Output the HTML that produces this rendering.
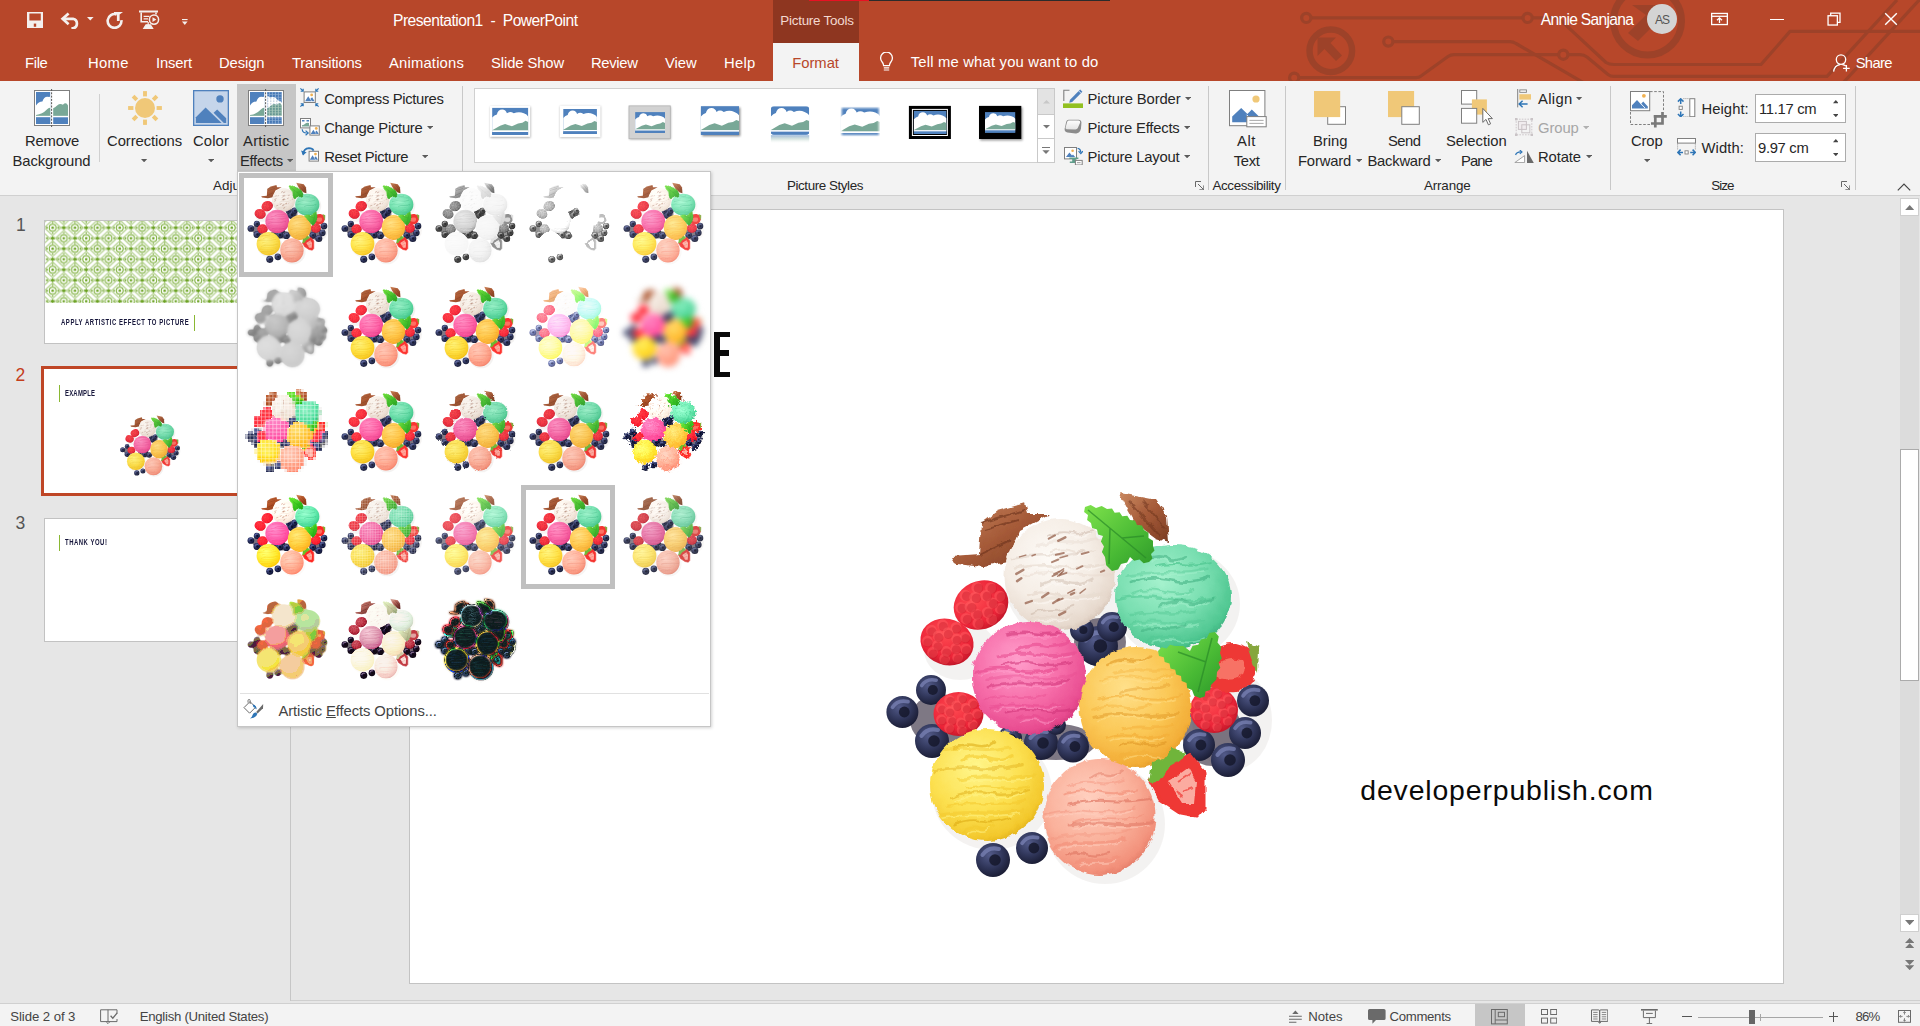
<!DOCTYPE html>
<html><head><meta charset="utf-8"><title>PowerPoint</title>
<style>
html,body{margin:0;padding:0;}
body{width:1920px;height:1026px;overflow:hidden;position:relative;background:#e6e6e6;font-family:"Liberation Sans", sans-serif;}
.t{position:absolute;white-space:pre;font-family:"Liberation Sans", sans-serif;}
.a{position:absolute;}

.sep{position:absolute;width:1px;background:#c8c8c8;top:86px;height:104px;}

</style></head><body>
<svg width="0" height="0" style="position:absolute"><defs><filter id="rough" x="-6%" y="-6%" width="112%" height="112%"><feTurbulence type="fractalNoise" baseFrequency="0.11" numOctaves="2" seed="7" result="n"/><feDisplacementMap in="SourceGraphic" in2="n" scale="6" xChannelSelector="R" yChannelSelector="G"/></filter><radialGradient id="gbb" cx="40%" cy="35%" r="70%"><stop offset="0" stop-color="#535b8a"/><stop offset="0.55" stop-color="#30365a"/><stop offset="1" stop-color="#181a30"/></radialGradient><radialGradient id="grs" cx="40%" cy="35%" r="70%"><stop offset="0" stop-color="#ff4c52"/><stop offset="0.7" stop-color="#ec2438"/><stop offset="1" stop-color="#be1628"/></radialGradient><linearGradient id="gch" x1="0" y1="0" x2="1" y2="1"><stop offset="0" stop-color="#c98860"/><stop offset="0.5" stop-color="#a55a38"/><stop offset="1" stop-color="#7a3c22"/></linearGradient><linearGradient id="glf" x1="0" y1="0" x2="1" y2="1"><stop offset="0" stop-color="#7fe24c"/><stop offset="0.6" stop-color="#48b934"/><stop offset="1" stop-color="#2c962a"/></linearGradient><radialGradient id="gv" cx="40%" cy="34%" r="72%"><stop offset="0" stop-color="#fdfaf6"/><stop offset="0.55" stop-color="#f5ede5"/><stop offset="0.88" stop-color="#e6d8cc"/><stop offset="1" stop-color="#cfbcae"/></radialGradient><clipPath id="cv"><ellipse cx="199.5" cy="105" rx="54" ry="55"/></clipPath><radialGradient id="gm" cx="40%" cy="34%" r="72%"><stop offset="0" stop-color="#a6f2ce"/><stop offset="0.55" stop-color="#78deb0"/><stop offset="0.88" stop-color="#4ec690"/><stop offset="1" stop-color="#36a878"/></radialGradient><clipPath id="cm"><ellipse cx="313" cy="127" rx="57" ry="51"/></clipPath><radialGradient id="gp" cx="40%" cy="34%" r="72%"><stop offset="0" stop-color="#ff9ecb"/><stop offset="0.55" stop-color="#f66ca8"/><stop offset="0.88" stop-color="#e84c90"/><stop offset="1" stop-color="#cf3378"/></radialGradient><clipPath id="cp"><ellipse cx="169" cy="208" rx="56" ry="55"/></clipPath><radialGradient id="go" cx="40%" cy="34%" r="72%"><stop offset="0" stop-color="#ffe08a"/><stop offset="0.55" stop-color="#fbc856"/><stop offset="0.88" stop-color="#f3ae38"/><stop offset="1" stop-color="#e09624"/></radialGradient><clipPath id="co"><ellipse cx="275.5" cy="237" rx="55" ry="59"/></clipPath><radialGradient id="gy" cx="40%" cy="34%" r="72%"><stop offset="0" stop-color="#fff68c"/><stop offset="0.55" stop-color="#fce050"/><stop offset="0.88" stop-color="#f3c82c"/><stop offset="1" stop-color="#dfae18"/></radialGradient><clipPath id="cy"><ellipse cx="127" cy="315" rx="56" ry="55"/></clipPath><radialGradient id="gs" cx="40%" cy="34%" r="72%"><stop offset="0" stop-color="#ffd0c0"/><stop offset="0.55" stop-color="#fab09a"/><stop offset="0.88" stop-color="#f2907a"/><stop offset="1" stop-color="#df7662"/></radialGradient><clipPath id="cs"><ellipse cx="239.5" cy="347" rx="55" ry="57"/></clipPath><symbol id="ice" viewBox="0 0 440 430"><g opacity=".5" fill="#e9e6e4"><ellipse cx="205" cy="112" rx="60" ry="60"/><ellipse cx="318" cy="134" rx="62" ry="56"/><ellipse cx="132" cy="322" rx="60" ry="58"/><ellipse cx="245" cy="354" rx="60" ry="60"/><ellipse cx="100" cy="180" rx="36" ry="30"/><ellipse cx="372" cy="250" rx="40" ry="50"/></g><g fill="#2a2034" opacity=".6"><ellipse cx="240" cy="172" rx="26" ry="24"/><ellipse cx="196" cy="272" rx="40" ry="18"/><ellipse cx="352" cy="262" rx="30" ry="34"/><ellipse cx="80" cy="250" rx="30" ry="26"/></g><g filter="url(#rough)"><path d="M92 87 L119 85 L121 53 L137 41 L165 33 L168 44 L190 44 L160 60 L147 92 L124 97 L96 94 Z" fill="url(#gch)"/><path d="M121 53 L165 40 M119 85 L150 70 M124 60 L158 50" stroke="#6a321c" stroke-width="2" fill="none" opacity=".6"/><path d="M260 23 L296 30 L307 46 L309 73 L296 69 L277 55 L268 39 Z" fill="url(#gch)"/><path d="M270 32 L300 66 M282 30 L305 58" stroke="#6a321c" stroke-width="2" opacity=".5"/></g><circle cx="238" cy="176" r="20" fill="url(#gbb)"/><circle cx="240.4" cy="176.0" r="6.8" fill="#15172b" opacity=".85"/><path d="M225.6 170.0 Q232.0 160.0 245.0 163.0" stroke="#7f88bb" stroke-width="4.8" fill="none" stroke-linecap="round" opacity=".7"/><circle cx="252" cy="157" r="15" fill="url(#gbb)"/><circle cx="253.8" cy="157.0" r="5.1" fill="#15172b" opacity=".85"/><path d="M242.7 152.5 Q247.5 145.0 257.2 147.2" stroke="#7f88bb" stroke-width="3.6" fill="none" stroke-linecap="round" opacity=".7"/><circle cx="222" cy="160" r="12" fill="url(#gbb)"/><circle cx="223.4" cy="160.0" r="4.1" fill="#15172b" opacity=".85"/><path d="M214.6 156.4 Q218.4 150.4 226.2 152.2" stroke="#7f88bb" stroke-width="2.9" fill="none" stroke-linecap="round" opacity=".7"/><circle cx="42.4" cy="242" r="16" fill="url(#gbb)"/><circle cx="44.3" cy="242.0" r="5.4" fill="#15172b" opacity=".85"/><path d="M32.5 237.2 Q37.6 229.2 48.0 231.6" stroke="#7f88bb" stroke-width="3.8" fill="none" stroke-linecap="round" opacity=".7"/><circle cx="71" cy="220" r="15" fill="url(#gbb)"/><circle cx="72.8" cy="220.0" r="5.1" fill="#15172b" opacity=".85"/><path d="M61.7 215.5 Q66.5 208.0 76.2 210.2" stroke="#7f88bb" stroke-width="3.6" fill="none" stroke-linecap="round" opacity=".7"/><circle cx="72" cy="271" r="17" fill="url(#gbb)"/><circle cx="74.0" cy="271.0" r="5.8" fill="#15172b" opacity=".85"/><path d="M61.5 265.9 Q66.9 257.4 78.0 259.9" stroke="#7f88bb" stroke-width="4.1" fill="none" stroke-linecap="round" opacity=".7"/><circle cx="181" cy="273" r="17" fill="url(#gbb)"/><circle cx="183.0" cy="273.0" r="5.8" fill="#15172b" opacity=".85"/><path d="M170.5 267.9 Q175.9 259.4 186.9 261.9" stroke="#7f88bb" stroke-width="4.1" fill="none" stroke-linecap="round" opacity=".7"/><circle cx="213" cy="276.5" r="16" fill="url(#gbb)"/><circle cx="214.9" cy="276.5" r="5.4" fill="#15172b" opacity=".85"/><path d="M203.1 271.7 Q208.2 263.7 218.6 266.1" stroke="#7f88bb" stroke-width="3.8" fill="none" stroke-linecap="round" opacity=".7"/><circle cx="339" cy="275" r="16" fill="url(#gbb)"/><circle cx="340.9" cy="275.0" r="5.4" fill="#15172b" opacity=".85"/><path d="M329.1 270.2 Q334.2 262.2 344.6 264.6" stroke="#7f88bb" stroke-width="3.8" fill="none" stroke-linecap="round" opacity=".7"/><circle cx="393" cy="230.6" r="16" fill="url(#gbb)"/><circle cx="394.9" cy="230.6" r="5.4" fill="#15172b" opacity=".85"/><path d="M383.1 225.8 Q388.2 217.8 398.6 220.2" stroke="#7f88bb" stroke-width="3.8" fill="none" stroke-linecap="round" opacity=".7"/><circle cx="385" cy="263" r="16" fill="url(#gbb)"/><circle cx="386.9" cy="263.0" r="5.4" fill="#15172b" opacity=".85"/><path d="M375.1 258.2 Q380.2 250.2 390.6 252.6" stroke="#7f88bb" stroke-width="3.8" fill="none" stroke-linecap="round" opacity=".7"/><circle cx="368" cy="290" r="17" fill="url(#gbb)"/><circle cx="370.0" cy="290.0" r="5.8" fill="#15172b" opacity=".85"/><path d="M357.5 284.9 Q362.9 276.4 373.9 278.9" stroke="#7f88bb" stroke-width="4.1" fill="none" stroke-linecap="round" opacity=".7"/><circle cx="133" cy="390" r="17" fill="url(#gbb)"/><circle cx="135.0" cy="390.0" r="5.8" fill="#15172b" opacity=".85"/><path d="M122.5 384.9 Q127.9 376.4 138.9 378.9" stroke="#7f88bb" stroke-width="4.1" fill="none" stroke-linecap="round" opacity=".7"/><circle cx="172" cy="378" r="16" fill="url(#gbb)"/><circle cx="173.9" cy="378.0" r="5.4" fill="#15172b" opacity=".85"/><path d="M162.1 373.2 Q167.2 365.2 177.6 367.6" stroke="#7f88bb" stroke-width="3.8" fill="none" stroke-linecap="round" opacity=".7"/><circle cx="150" cy="268" r="12" fill="url(#gbb)"/><circle cx="151.4" cy="268.0" r="4.1" fill="#15172b" opacity=".85"/><path d="M142.6 264.4 Q146.4 258.4 154.2 260.2" stroke="#7f88bb" stroke-width="2.9" fill="none" stroke-linecap="round" opacity=".7"/><circle cx="305" cy="268" r="12" fill="url(#gbb)"/><circle cx="306.4" cy="268.0" r="4.1" fill="#15172b" opacity=".85"/><path d="M297.6 264.4 Q301.4 258.4 309.2 260.2" stroke="#7f88bb" stroke-width="2.9" fill="none" stroke-linecap="round" opacity=".7"/><circle cx="196" cy="255" r="10" fill="url(#gbb)"/><circle cx="197.2" cy="255.0" r="3.4" fill="#15172b" opacity=".85"/><path d="M189.8 252.0 Q193.0 247.0 199.5 248.5" stroke="#7f88bb" stroke-width="2.4" fill="none" stroke-linecap="round" opacity=".7"/><g transform="rotate(-25 121 135)"><ellipse cx="121" cy="135" rx="28" ry="24" fill="url(#grs)"/><circle cx="141.7" cy="135.0" r="5.6" fill="#ff5e62" opacity=".5"/><circle cx="142.9" cy="136.4" r="4.8" fill="#bf1426" opacity=".35"/><circle cx="136.9" cy="146.4" r="5.6" fill="#ff5e62" opacity=".5"/><circle cx="138.1" cy="147.8" r="4.8" fill="#bf1426" opacity=".35"/><circle cx="124.6" cy="152.5" r="5.6" fill="#ff5e62" opacity=".5"/><circle cx="125.8" cy="153.9" r="4.8" fill="#bf1426" opacity=".35"/><circle cx="110.6" cy="150.4" r="5.6" fill="#ff5e62" opacity=".5"/><circle cx="111.8" cy="151.8" r="4.8" fill="#bf1426" opacity=".35"/><circle cx="101.5" cy="141.1" r="5.6" fill="#ff5e62" opacity=".5"/><circle cx="102.7" cy="142.5" r="4.8" fill="#bf1426" opacity=".35"/><circle cx="101.5" cy="128.9" r="5.6" fill="#ff5e62" opacity=".5"/><circle cx="102.7" cy="130.3" r="4.8" fill="#bf1426" opacity=".35"/><circle cx="110.6" cy="119.6" r="5.6" fill="#ff5e62" opacity=".5"/><circle cx="111.8" cy="121.0" r="4.8" fill="#bf1426" opacity=".35"/><circle cx="124.6" cy="117.5" r="5.6" fill="#ff5e62" opacity=".5"/><circle cx="125.8" cy="118.9" r="4.8" fill="#bf1426" opacity=".35"/><circle cx="136.9" cy="123.6" r="5.6" fill="#ff5e62" opacity=".5"/><circle cx="138.1" cy="125.0" r="4.8" fill="#bf1426" opacity=".35"/><circle cx="131.7" cy="137.8" r="5.6" fill="#ff5e62" opacity=".5"/><circle cx="132.9" cy="139.2" r="4.8" fill="#bf1426" opacity=".35"/><circle cx="123.5" cy="144.4" r="5.6" fill="#ff5e62" opacity=".5"/><circle cx="124.7" cy="145.8" r="4.8" fill="#bf1426" opacity=".35"/><circle cx="112.8" cy="141.5" r="5.6" fill="#ff5e62" opacity=".5"/><circle cx="114.0" cy="142.9" r="4.8" fill="#bf1426" opacity=".35"/><circle cx="110.3" cy="132.2" r="5.6" fill="#ff5e62" opacity=".5"/><circle cx="111.5" cy="133.6" r="4.8" fill="#bf1426" opacity=".35"/><circle cx="118.5" cy="125.6" r="5.6" fill="#ff5e62" opacity=".5"/><circle cx="119.7" cy="127.0" r="4.8" fill="#bf1426" opacity=".35"/><circle cx="129.2" cy="128.5" r="5.6" fill="#ff5e62" opacity=".5"/><circle cx="130.4" cy="129.9" r="4.8" fill="#bf1426" opacity=".35"/></g><g transform="rotate(20 87 172)"><ellipse cx="87" cy="172" rx="27" ry="23" fill="url(#grs)"/><circle cx="107.0" cy="172.0" r="5.4" fill="#ff5e62" opacity=".5"/><circle cx="108.2" cy="173.4" r="4.6" fill="#bf1426" opacity=".35"/><circle cx="102.3" cy="182.9" r="5.4" fill="#ff5e62" opacity=".5"/><circle cx="103.5" cy="184.3" r="4.6" fill="#bf1426" opacity=".35"/><circle cx="90.5" cy="188.8" r="5.4" fill="#ff5e62" opacity=".5"/><circle cx="91.7" cy="190.2" r="4.6" fill="#bf1426" opacity=".35"/><circle cx="77.0" cy="186.7" r="5.4" fill="#ff5e62" opacity=".5"/><circle cx="78.2" cy="188.1" r="4.6" fill="#bf1426" opacity=".35"/><circle cx="68.2" cy="177.8" r="5.4" fill="#ff5e62" opacity=".5"/><circle cx="69.4" cy="179.2" r="4.6" fill="#bf1426" opacity=".35"/><circle cx="68.2" cy="166.2" r="5.4" fill="#ff5e62" opacity=".5"/><circle cx="69.4" cy="167.6" r="4.6" fill="#bf1426" opacity=".35"/><circle cx="77.0" cy="157.3" r="5.4" fill="#ff5e62" opacity=".5"/><circle cx="78.2" cy="158.7" r="4.6" fill="#bf1426" opacity=".35"/><circle cx="90.5" cy="155.2" r="5.4" fill="#ff5e62" opacity=".5"/><circle cx="91.7" cy="156.6" r="4.6" fill="#bf1426" opacity=".35"/><circle cx="102.3" cy="161.1" r="5.4" fill="#ff5e62" opacity=".5"/><circle cx="103.5" cy="162.5" r="4.6" fill="#bf1426" opacity=".35"/><circle cx="97.3" cy="174.7" r="5.4" fill="#ff5e62" opacity=".5"/><circle cx="98.5" cy="176.1" r="4.6" fill="#bf1426" opacity=".35"/><circle cx="89.4" cy="181.0" r="5.4" fill="#ff5e62" opacity=".5"/><circle cx="90.6" cy="182.4" r="4.6" fill="#bf1426" opacity=".35"/><circle cx="79.1" cy="178.3" r="5.4" fill="#ff5e62" opacity=".5"/><circle cx="80.3" cy="179.7" r="4.6" fill="#bf1426" opacity=".35"/><circle cx="76.7" cy="169.3" r="5.4" fill="#ff5e62" opacity=".5"/><circle cx="77.9" cy="170.7" r="4.6" fill="#bf1426" opacity=".35"/><circle cx="84.6" cy="163.0" r="5.4" fill="#ff5e62" opacity=".5"/><circle cx="85.8" cy="164.4" r="4.6" fill="#bf1426" opacity=".35"/><circle cx="94.9" cy="165.7" r="5.4" fill="#ff5e62" opacity=".5"/><circle cx="96.1" cy="167.1" r="4.6" fill="#bf1426" opacity=".35"/></g><g transform="rotate(0 98.5 244)"><ellipse cx="98.5" cy="244" rx="25" ry="22" fill="url(#grs)"/><circle cx="117.0" cy="244.0" r="5.0" fill="#ff5e62" opacity=".5"/><circle cx="118.2" cy="245.4" r="4.2" fill="#bf1426" opacity=".35"/><circle cx="112.7" cy="254.5" r="5.0" fill="#ff5e62" opacity=".5"/><circle cx="113.9" cy="255.9" r="4.2" fill="#bf1426" opacity=".35"/><circle cx="101.7" cy="260.0" r="5.0" fill="#ff5e62" opacity=".5"/><circle cx="102.9" cy="261.4" r="4.2" fill="#bf1426" opacity=".35"/><circle cx="89.2" cy="258.1" r="5.0" fill="#ff5e62" opacity=".5"/><circle cx="90.5" cy="259.5" r="4.2" fill="#bf1426" opacity=".35"/><circle cx="81.1" cy="249.6" r="5.0" fill="#ff5e62" opacity=".5"/><circle cx="82.3" cy="251.0" r="4.2" fill="#bf1426" opacity=".35"/><circle cx="81.1" cy="238.4" r="5.0" fill="#ff5e62" opacity=".5"/><circle cx="82.3" cy="239.8" r="4.2" fill="#bf1426" opacity=".35"/><circle cx="89.2" cy="229.9" r="5.0" fill="#ff5e62" opacity=".5"/><circle cx="90.5" cy="231.3" r="4.2" fill="#bf1426" opacity=".35"/><circle cx="101.7" cy="228.0" r="5.0" fill="#ff5e62" opacity=".5"/><circle cx="102.9" cy="229.4" r="4.2" fill="#bf1426" opacity=".35"/><circle cx="112.7" cy="233.5" r="5.0" fill="#ff5e62" opacity=".5"/><circle cx="113.9" cy="234.9" r="4.2" fill="#bf1426" opacity=".35"/><circle cx="108.1" cy="246.6" r="5.0" fill="#ff5e62" opacity=".5"/><circle cx="109.3" cy="248.0" r="4.2" fill="#bf1426" opacity=".35"/><circle cx="100.7" cy="252.6" r="5.0" fill="#ff5e62" opacity=".5"/><circle cx="101.9" cy="254.0" r="4.2" fill="#bf1426" opacity=".35"/><circle cx="91.2" cy="250.0" r="5.0" fill="#ff5e62" opacity=".5"/><circle cx="92.4" cy="251.4" r="4.2" fill="#bf1426" opacity=".35"/><circle cx="88.9" cy="241.4" r="5.0" fill="#ff5e62" opacity=".5"/><circle cx="90.1" cy="242.8" r="4.2" fill="#bf1426" opacity=".35"/><circle cx="96.3" cy="235.4" r="5.0" fill="#ff5e62" opacity=".5"/><circle cx="97.5" cy="236.8" r="4.2" fill="#bf1426" opacity=".35"/><circle cx="105.8" cy="238.0" r="5.0" fill="#ff5e62" opacity=".5"/><circle cx="107.0" cy="239.4" r="4.2" fill="#bf1426" opacity=".35"/></g><g transform="rotate(0 354 240)"><ellipse cx="354" cy="240" rx="24" ry="23" fill="url(#grs)"/><circle cx="371.8" cy="240.0" r="4.8" fill="#ff5e62" opacity=".5"/><circle cx="373.0" cy="241.4" r="4.1" fill="#bf1426" opacity=".35"/><circle cx="367.6" cy="250.9" r="4.8" fill="#ff5e62" opacity=".5"/><circle cx="368.8" cy="252.3" r="4.1" fill="#bf1426" opacity=".35"/><circle cx="357.1" cy="256.8" r="4.8" fill="#ff5e62" opacity=".5"/><circle cx="358.3" cy="258.2" r="4.1" fill="#bf1426" opacity=".35"/><circle cx="345.1" cy="254.7" r="4.8" fill="#ff5e62" opacity=".5"/><circle cx="346.3" cy="256.1" r="4.1" fill="#bf1426" opacity=".35"/><circle cx="337.3" cy="245.8" r="4.8" fill="#ff5e62" opacity=".5"/><circle cx="338.5" cy="247.2" r="4.1" fill="#bf1426" opacity=".35"/><circle cx="337.3" cy="234.2" r="4.8" fill="#ff5e62" opacity=".5"/><circle cx="338.5" cy="235.6" r="4.1" fill="#bf1426" opacity=".35"/><circle cx="345.1" cy="225.3" r="4.8" fill="#ff5e62" opacity=".5"/><circle cx="346.3" cy="226.7" r="4.1" fill="#bf1426" opacity=".35"/><circle cx="357.1" cy="223.2" r="4.8" fill="#ff5e62" opacity=".5"/><circle cx="358.3" cy="224.6" r="4.1" fill="#bf1426" opacity=".35"/><circle cx="367.6" cy="229.1" r="4.8" fill="#ff5e62" opacity=".5"/><circle cx="368.8" cy="230.5" r="4.1" fill="#bf1426" opacity=".35"/><circle cx="363.2" cy="242.7" r="4.8" fill="#ff5e62" opacity=".5"/><circle cx="364.4" cy="244.1" r="4.1" fill="#bf1426" opacity=".35"/><circle cx="356.1" cy="249.0" r="4.8" fill="#ff5e62" opacity=".5"/><circle cx="357.3" cy="250.4" r="4.1" fill="#bf1426" opacity=".35"/><circle cx="347.0" cy="246.3" r="4.8" fill="#ff5e62" opacity=".5"/><circle cx="348.2" cy="247.7" r="4.1" fill="#bf1426" opacity=".35"/><circle cx="344.8" cy="237.3" r="4.8" fill="#ff5e62" opacity=".5"/><circle cx="346.0" cy="238.7" r="4.1" fill="#bf1426" opacity=".35"/><circle cx="351.9" cy="231.0" r="4.8" fill="#ff5e62" opacity=".5"/><circle cx="353.1" cy="232.4" r="4.1" fill="#bf1426" opacity=".35"/><circle cx="361.0" cy="233.7" r="4.8" fill="#ff5e62" opacity=".5"/><circle cx="362.2" cy="235.1" r="4.1" fill="#bf1426" opacity=".35"/></g><g filter="url(#rough)"><path d="M344 192 Q350 172 376 173 Q398 178 397 198 Q394 216 376 222 Q354 224 344 210 Z" fill="#ee3834"/><path d="M356 196 Q366 186 382 190 Q388 198 380 208 Q366 212 356 206Z" fill="#f98676" opacity=".75"/><path d="M386 172 L399 178 L398 204 L391 188Z" fill="#86a63e"/></g><g filter="url(#rough)"><ellipse cx="199.5" cy="105" rx="55" ry="56" fill="url(#gv)"/><g clip-path="url(#cv)"><path d="M189.0 65.8 Q200.1 60.4 211.2 63.0 T233.4 60.1" fill="none" stroke="#cfbcae" stroke-width="1.9" stroke-opacity="0.56" stroke-linecap="round"/><path d="M193.0 68.8 Q200.1 63.4 211.2 66.0 T229.4 63.1" fill="none" stroke="#fdfaf6" stroke-width="1.6" stroke-opacity=".5" stroke-linecap="round"/><path d="M177.1 75.8 Q192.3 70.5 207.6 71.7 T238.1 67.5" fill="none" stroke="#e6d8cc" stroke-width="3.1" stroke-opacity="0.38" stroke-linecap="round"/><path d="M190.3 82.2 Q201.5 77.1 212.8 81.1 T235.2 80.0" fill="none" stroke="#e6d8cc" stroke-width="1.9" stroke-opacity="0.57" stroke-linecap="round"/><path d="M194.3 85.2 Q201.5 80.1 212.8 84.1 T231.2 83.0" fill="none" stroke="#fdfaf6" stroke-width="1.6" stroke-opacity=".5" stroke-linecap="round"/><path d="M151.6 89.2 Q169.5 84.3 187.4 85.4 T223.1 81.6" fill="none" stroke="#cfbcae" stroke-width="2.4" stroke-opacity="0.36" stroke-linecap="round"/><path d="M155.0 98.6 Q177.5 93.4 200.0 96.3 T245.0 94.0" fill="none" stroke="#e6d8cc" stroke-width="2.4" stroke-opacity="0.58" stroke-linecap="round"/><path d="M159.0 101.6 Q177.5 96.4 200.0 99.3 T241.0 97.0" fill="none" stroke="#fdfaf6" stroke-width="1.6" stroke-opacity=".5" stroke-linecap="round"/><path d="M163.7 105.2 Q188.4 99.6 213.1 103.7 T262.6 102.1" fill="none" stroke="#e6d8cc" stroke-width="2.0" stroke-opacity="0.46" stroke-linecap="round"/><path d="M180.7 115.2 Q193.8 108.2 206.8 112.1 T233.0 109.0" fill="none" stroke="#cfbcae" stroke-width="3.3" stroke-opacity="0.49" stroke-linecap="round"/><path d="M184.7 118.2 Q193.8 111.2 206.8 115.1 T229.0 112.0" fill="none" stroke="#fdfaf6" stroke-width="1.6" stroke-opacity=".5" stroke-linecap="round"/><path d="M168.1 125.1 Q179.8 120.6 191.5 123.8 T214.9 122.5" fill="none" stroke="#e6d8cc" stroke-width="2.3" stroke-opacity="0.69" stroke-linecap="round"/><path d="M172.0 131.0 Q189.6 126.9 207.2 127.5 T242.3 123.9" fill="none" stroke="#e6d8cc" stroke-width="3.3" stroke-opacity="0.47" stroke-linecap="round"/><path d="M176.0 134.0 Q189.6 129.9 207.2 130.5 T238.3 126.9" fill="none" stroke="#fdfaf6" stroke-width="1.6" stroke-opacity=".5" stroke-linecap="round"/><path d="M171.6 144.1 Q182.1 139.8 192.5 139.9 T213.4 135.8" fill="none" stroke="#cfbcae" stroke-width="1.9" stroke-opacity="0.63" stroke-linecap="round"/><path d="M170.4 149.0 Q180.7 145.5 191.0 147.1 T211.6 145.2" fill="none" stroke="#e6d8cc" stroke-width="1.8" stroke-opacity="0.58" stroke-linecap="round"/><path d="M174.4 152.0 Q180.7 148.5 191.0 150.1 T207.6 148.2" fill="none" stroke="#fdfaf6" stroke-width="1.6" stroke-opacity=".5" stroke-linecap="round"/></g></g><g filter="url(#rough)"><ellipse cx="313" cy="127" rx="58" ry="52" fill="url(#gm)"/><g clip-path="url(#cm)"><path d="M288.1 88.9 Q297.2 83.1 306.3 87.8 T324.5 86.7" fill="none" stroke="#36a878" stroke-width="3.2" stroke-opacity="0.46" stroke-linecap="round"/><path d="M292.1 91.9 Q297.2 86.1 306.3 90.8 T320.5 89.7" fill="none" stroke="#a6f2ce" stroke-width="1.6" stroke-opacity=".5" stroke-linecap="round"/><path d="M295.8 96.5 Q309.5 93.0 323.3 94.3 T350.8 92.0" fill="none" stroke="#4ec690" stroke-width="2.0" stroke-opacity="0.70" stroke-linecap="round"/><path d="M267.7 105.8 Q287.9 101.7 308.0 102.3 T348.3 98.8" fill="none" stroke="#4ec690" stroke-width="2.6" stroke-opacity="0.38" stroke-linecap="round"/><path d="M271.7 108.8 Q287.9 104.7 308.0 105.3 T344.3 101.8" fill="none" stroke="#a6f2ce" stroke-width="1.6" stroke-opacity=".5" stroke-linecap="round"/><path d="M269.8 112.9 Q289.5 105.6 309.3 110.0 T348.8 107.0" fill="none" stroke="#36a878" stroke-width="2.6" stroke-opacity="0.52" stroke-linecap="round"/><path d="M272.5 122.8 Q287.7 116.8 303.0 121.4 T333.4 120.1" fill="none" stroke="#4ec690" stroke-width="1.9" stroke-opacity="0.44" stroke-linecap="round"/><path d="M276.5 125.8 Q287.7 119.8 303.0 124.4 T329.4 123.1" fill="none" stroke="#a6f2ce" stroke-width="1.6" stroke-opacity=".5" stroke-linecap="round"/><path d="M253.6 129.6 Q278.9 123.5 304.2 128.4 T354.8 127.3" fill="none" stroke="#4ec690" stroke-width="2.4" stroke-opacity="0.56" stroke-linecap="round"/><path d="M299.7 136.0 Q313.0 129.4 326.4 132.4 T353.2 128.7" fill="none" stroke="#36a878" stroke-width="3.1" stroke-opacity="0.44" stroke-linecap="round"/><path d="M303.7 139.0 Q313.0 132.4 326.4 135.4 T349.2 131.7" fill="none" stroke="#a6f2ce" stroke-width="1.6" stroke-opacity=".5" stroke-linecap="round"/><path d="M271.7 145.1 Q287.6 141.8 303.6 143.1 T335.5 141.1" fill="none" stroke="#4ec690" stroke-width="2.6" stroke-opacity="0.43" stroke-linecap="round"/><path d="M269.9 153.7 Q288.3 150.2 306.6 152.4 T343.3 151.1" fill="none" stroke="#4ec690" stroke-width="2.1" stroke-opacity="0.36" stroke-linecap="round"/><path d="M273.9 156.7 Q288.3 153.2 306.6 155.4 T339.3 154.1" fill="none" stroke="#a6f2ce" stroke-width="1.6" stroke-opacity=".5" stroke-linecap="round"/><path d="M282.7 160.9 Q293.1 155.0 303.6 157.7 T324.5 154.5" fill="none" stroke="#36a878" stroke-width="2.3" stroke-opacity="0.40" stroke-linecap="round"/><path d="M287.8 170.2 Q302.7 164.8 317.6 168.1 T347.3 166.0" fill="none" stroke="#4ec690" stroke-width="1.7" stroke-opacity="0.40" stroke-linecap="round"/><path d="M291.8 173.2 Q302.7 167.8 317.6 171.1 T343.3 169.0" fill="none" stroke="#a6f2ce" stroke-width="1.6" stroke-opacity=".5" stroke-linecap="round"/></g></g><g filter="url(#rough)"><ellipse cx="169" cy="208" rx="57" ry="56" fill="url(#gp)"/><g clip-path="url(#cp)"><path d="M146.6 164.5 Q160.6 161.8 174.7 163.4 T202.9 162.2" fill="none" stroke="#cf3378" stroke-width="2.5" stroke-opacity="0.57" stroke-linecap="round"/><path d="M150.6 167.5 Q160.6 164.8 174.7 166.4 T198.9 165.2" fill="none" stroke="#ff9ecb" stroke-width="1.6" stroke-opacity=".5" stroke-linecap="round"/><path d="M157.7 180.2 Q170.4 173.9 183.2 176.0 T208.8 171.8" fill="none" stroke="#e84c90" stroke-width="3.2" stroke-opacity="0.61" stroke-linecap="round"/><path d="M139.3 185.7 Q158.3 181.6 177.4 184.4 T215.4 183.1" fill="none" stroke="#e84c90" stroke-width="3.2" stroke-opacity="0.59" stroke-linecap="round"/><path d="M143.3 188.7 Q158.3 184.6 177.4 187.4 T211.4 186.1" fill="none" stroke="#ff9ecb" stroke-width="1.6" stroke-opacity=".5" stroke-linecap="round"/><path d="M142.9 195.0 Q160.1 190.0 177.3 193.5 T211.6 192.1" fill="none" stroke="#cf3378" stroke-width="2.3" stroke-opacity="0.57" stroke-linecap="round"/><path d="M116.3 202.4 Q136.7 195.3 157.0 200.1 T197.7 197.9" fill="none" stroke="#e84c90" stroke-width="2.9" stroke-opacity="0.66" stroke-linecap="round"/><path d="M120.3 205.4 Q136.7 198.3 157.0 203.1 T193.7 200.9" fill="none" stroke="#ff9ecb" stroke-width="1.6" stroke-opacity=".5" stroke-linecap="round"/><path d="M126.8 210.3 Q149.1 203.5 171.3 207.3 T215.8 204.4" fill="none" stroke="#e84c90" stroke-width="3.0" stroke-opacity="0.38" stroke-linecap="round"/><path d="M127.9 217.2 Q148.2 210.6 168.5 213.5 T209.0 209.8" fill="none" stroke="#cf3378" stroke-width="2.7" stroke-opacity="0.52" stroke-linecap="round"/><path d="M131.9 220.2 Q148.2 213.6 168.5 216.5 T205.0 212.8" fill="none" stroke="#ff9ecb" stroke-width="1.6" stroke-opacity=".5" stroke-linecap="round"/><path d="M124.6 230.7 Q139.9 224.2 155.1 227.2 T185.5 223.8" fill="none" stroke="#e84c90" stroke-width="1.9" stroke-opacity="0.42" stroke-linecap="round"/><path d="M130.3 236.9 Q148.8 232.9 167.3 235.5 T204.4 234.1" fill="none" stroke="#e84c90" stroke-width="2.0" stroke-opacity="0.58" stroke-linecap="round"/><path d="M134.3 239.9 Q148.8 235.9 167.3 238.5 T200.4 237.1" fill="none" stroke="#ff9ecb" stroke-width="1.6" stroke-opacity=".5" stroke-linecap="round"/><path d="M145.8 242.4 Q163.3 238.2 180.8 241.0 T215.8 239.6" fill="none" stroke="#cf3378" stroke-width="2.2" stroke-opacity="0.55" stroke-linecap="round"/><path d="M156.5 249.1 Q167.6 243.5 178.6 247.6 T200.7 246.0" fill="none" stroke="#e84c90" stroke-width="2.1" stroke-opacity="0.68" stroke-linecap="round"/><path d="M160.5 252.1 Q167.6 246.5 178.6 250.6 T196.7 249.0" fill="none" stroke="#ff9ecb" stroke-width="1.6" stroke-opacity=".5" stroke-linecap="round"/></g></g><g filter="url(#rough)"><ellipse cx="275.5" cy="237" rx="56" ry="60" fill="url(#go)"/><g clip-path="url(#co)"><path d="M248.2 194.0 Q258.7 188.5 269.2 190.3 T290.2 186.5" fill="none" stroke="#e09624" stroke-width="2.5" stroke-opacity="0.57" stroke-linecap="round"/><path d="M252.2 197.0 Q258.7 191.5 269.2 193.3 T286.2 189.5" fill="none" stroke="#ffe08a" stroke-width="1.6" stroke-opacity=".5" stroke-linecap="round"/><path d="M254.0 203.0 Q271.5 199.3 289.0 200.1 T324.0 197.2" fill="none" stroke="#f3ae38" stroke-width="3.2" stroke-opacity="0.36" stroke-linecap="round"/><path d="M240.0 210.8 Q258.7 204.0 277.5 207.4 T315.0 204.0" fill="none" stroke="#f3ae38" stroke-width="1.8" stroke-opacity="0.36" stroke-linecap="round"/><path d="M244.0 213.8 Q258.7 207.0 277.5 210.4 T311.0 207.0" fill="none" stroke="#ffe08a" stroke-width="1.6" stroke-opacity=".5" stroke-linecap="round"/><path d="M260.3 222.5 Q272.5 218.1 284.7 218.8 T309.1 215.2" fill="none" stroke="#e09624" stroke-width="2.7" stroke-opacity="0.37" stroke-linecap="round"/><path d="M239.3 229.4 Q259.6 222.7 279.8 227.7 T320.4 226.1" fill="none" stroke="#f3ae38" stroke-width="2.0" stroke-opacity="0.59" stroke-linecap="round"/><path d="M243.3 232.4 Q259.6 225.7 279.8 230.7 T316.4 229.1" fill="none" stroke="#ffe08a" stroke-width="1.6" stroke-opacity=".5" stroke-linecap="round"/><path d="M232.1 239.7 Q247.0 233.4 261.8 236.9 T291.5 234.0" fill="none" stroke="#f3ae38" stroke-width="2.1" stroke-opacity="0.41" stroke-linecap="round"/><path d="M233.9 247.4 Q255.0 241.2 276.1 245.0 T318.3 242.7" fill="none" stroke="#e09624" stroke-width="3.0" stroke-opacity="0.49" stroke-linecap="round"/><path d="M237.9 250.4 Q255.0 244.2 276.1 248.0 T314.3 245.7" fill="none" stroke="#ffe08a" stroke-width="1.6" stroke-opacity=".5" stroke-linecap="round"/><path d="M261.7 259.3 Q274.7 255.8 287.6 257.3 T313.5 255.4" fill="none" stroke="#f3ae38" stroke-width="2.7" stroke-opacity="0.51" stroke-linecap="round"/><path d="M247.2 267.7 Q262.3 261.8 277.4 266.3 T307.7 264.9" fill="none" stroke="#f3ae38" stroke-width="2.4" stroke-opacity="0.68" stroke-linecap="round"/><path d="M251.2 270.7 Q262.3 264.8 277.4 269.3 T303.7 267.9" fill="none" stroke="#ffe08a" stroke-width="1.6" stroke-opacity=".5" stroke-linecap="round"/><path d="M258.8 275.3 Q270.2 269.9 281.7 273.7 T304.7 272.1" fill="none" stroke="#e09624" stroke-width="2.0" stroke-opacity="0.60" stroke-linecap="round"/><path d="M260.2 286.7 Q274.5 280.3 288.9 284.1 T317.6 281.5" fill="none" stroke="#f3ae38" stroke-width="3.2" stroke-opacity="0.46" stroke-linecap="round"/><path d="M264.2 289.7 Q274.5 283.3 288.9 287.1 T313.6 284.5" fill="none" stroke="#ffe08a" stroke-width="1.6" stroke-opacity=".5" stroke-linecap="round"/></g></g><g filter="url(#rough)"><ellipse cx="127" cy="315" rx="57" ry="56" fill="url(#gy)"/><g clip-path="url(#cy)"><path d="M95.2 278.3 Q105.2 272.7 115.1 275.4 T135.0 272.4" fill="none" stroke="#dfae18" stroke-width="2.5" stroke-opacity="0.62" stroke-linecap="round"/><path d="M99.2 281.3 Q105.2 275.7 115.1 278.4 T131.0 275.4" fill="none" stroke="#fff68c" stroke-width="1.6" stroke-opacity=".5" stroke-linecap="round"/><path d="M79.5 280.5 Q97.0 276.9 114.6 278.8 T149.7 277.1" fill="none" stroke="#f3c82c" stroke-width="3.0" stroke-opacity="0.47" stroke-linecap="round"/><path d="M101.8 289.8 Q114.6 283.4 127.5 287.8 T153.1 285.8" fill="none" stroke="#f3c82c" stroke-width="3.3" stroke-opacity="0.59" stroke-linecap="round"/><path d="M105.8 292.8 Q114.6 286.4 127.5 290.8 T149.1 288.8" fill="none" stroke="#fff68c" stroke-width="1.6" stroke-opacity=".5" stroke-linecap="round"/><path d="M68.0 302.0 Q91.6 296.0 115.2 298.3 T162.4 294.5" fill="none" stroke="#dfae18" stroke-width="2.9" stroke-opacity="0.45" stroke-linecap="round"/><path d="M98.3 310.0 Q117.5 305.5 136.8 307.5 T175.3 304.9" fill="none" stroke="#f3c82c" stroke-width="3.1" stroke-opacity="0.48" stroke-linecap="round"/><path d="M102.3 313.0 Q117.5 308.5 136.8 310.5 T171.3 307.9" fill="none" stroke="#fff68c" stroke-width="1.6" stroke-opacity=".5" stroke-linecap="round"/><path d="M106.0 318.5 Q121.5 313.9 137.0 317.4 T168.0 316.3" fill="none" stroke="#f3c82c" stroke-width="2.0" stroke-opacity="0.55" stroke-linecap="round"/><path d="M92.0 328.0 Q111.0 319.9 130.0 323.6 T168.0 319.2" fill="none" stroke="#dfae18" stroke-width="2.3" stroke-opacity="0.53" stroke-linecap="round"/><path d="M96.0 331.0 Q111.0 322.9 130.0 326.6 T164.0 322.2" fill="none" stroke="#fff68c" stroke-width="1.6" stroke-opacity=".5" stroke-linecap="round"/><path d="M88.9 335.6 Q107.8 332.3 126.7 333.5 T164.6 331.4" fill="none" stroke="#f3c82c" stroke-width="2.3" stroke-opacity="0.54" stroke-linecap="round"/><path d="M77.4 345.6 Q98.9 341.7 120.4 342.8 T163.4 339.9" fill="none" stroke="#f3c82c" stroke-width="3.1" stroke-opacity="0.50" stroke-linecap="round"/><path d="M81.4 348.6 Q98.9 344.7 120.4 345.8 T159.4 342.9" fill="none" stroke="#fff68c" stroke-width="1.6" stroke-opacity=".5" stroke-linecap="round"/><path d="M93.2 354.6 Q107.5 348.2 121.8 350.8 T150.4 347.0" fill="none" stroke="#dfae18" stroke-width="1.8" stroke-opacity="0.67" stroke-linecap="round"/><path d="M103.2 362.1 Q110.7 355.5 118.3 358.4 T133.4 354.7" fill="none" stroke="#f3c82c" stroke-width="2.2" stroke-opacity="0.46" stroke-linecap="round"/><path d="M107.2 365.1 Q110.7 358.5 118.3 361.4 T129.4 357.7" fill="none" stroke="#fff68c" stroke-width="1.6" stroke-opacity=".5" stroke-linecap="round"/></g></g><g filter="url(#rough)"><ellipse cx="239.5" cy="347" rx="56" ry="58" fill="url(#gs)"/><g clip-path="url(#cs)"><path d="M230.0 308.6 Q238.0 302.5 246.0 304.5 T262.0 300.4" fill="none" stroke="#df7662" stroke-width="2.0" stroke-opacity="0.44" stroke-linecap="round"/><path d="M234.0 311.6 Q238.0 305.5 246.0 307.5 T258.0 303.4" fill="none" stroke="#ffd0c0" stroke-width="1.6" stroke-opacity=".5" stroke-linecap="round"/><path d="M208.6 315.6 Q222.3 310.0 236.0 312.6 T263.4 309.5" fill="none" stroke="#f2907a" stroke-width="2.0" stroke-opacity="0.41" stroke-linecap="round"/><path d="M204.4 323.4 Q222.3 318.2 240.3 321.8 T276.3 320.3" fill="none" stroke="#f2907a" stroke-width="2.0" stroke-opacity="0.65" stroke-linecap="round"/><path d="M208.4 326.4 Q222.3 321.2 240.3 324.8 T272.3 323.3" fill="none" stroke="#ffd0c0" stroke-width="1.6" stroke-opacity=".5" stroke-linecap="round"/><path d="M207.7 334.5 Q229.2 329.6 250.8 331.2 T293.9 327.8" fill="none" stroke="#df7662" stroke-width="2.0" stroke-opacity="0.67" stroke-linecap="round"/><path d="M182.3 345.0 Q205.8 338.3 229.3 341.3 T276.2 337.7" fill="none" stroke="#f2907a" stroke-width="1.8" stroke-opacity="0.44" stroke-linecap="round"/><path d="M186.3 348.0 Q205.8 341.3 229.3 344.3 T272.2 340.7" fill="none" stroke="#ffd0c0" stroke-width="1.6" stroke-opacity=".5" stroke-linecap="round"/><path d="M211.8 353.1 Q229.7 347.4 247.6 349.0 T283.4 344.9" fill="none" stroke="#f2907a" stroke-width="1.6" stroke-opacity="0.59" stroke-linecap="round"/><path d="M209.2 355.0 Q230.1 351.9 251.0 353.9 T292.8 352.7" fill="none" stroke="#df7662" stroke-width="3.0" stroke-opacity="0.53" stroke-linecap="round"/><path d="M213.2 358.0 Q230.1 354.9 251.0 356.9 T288.8 355.7" fill="none" stroke="#ffd0c0" stroke-width="1.6" stroke-opacity=".5" stroke-linecap="round"/><path d="M190.7 368.6 Q210.7 364.0 230.8 364.3 T270.9 360.1" fill="none" stroke="#f2907a" stroke-width="2.6" stroke-opacity="0.36" stroke-linecap="round"/><path d="M195.2 376.9 Q212.4 372.1 229.6 373.0 T264.0 369.2" fill="none" stroke="#f2907a" stroke-width="3.4" stroke-opacity="0.64" stroke-linecap="round"/><path d="M199.2 379.9 Q212.4 375.1 229.6 376.0 T260.0 372.2" fill="none" stroke="#ffd0c0" stroke-width="1.6" stroke-opacity=".5" stroke-linecap="round"/><path d="M206.4 385.3 Q216.8 380.9 227.2 384.2 T248.1 383.0" fill="none" stroke="#df7662" stroke-width="2.2" stroke-opacity="0.62" stroke-linecap="round"/><path d="M215.6 392.4 Q226.6 389.2 237.5 390.0 T259.5 387.6" fill="none" stroke="#f2907a" stroke-width="3.1" stroke-opacity="0.60" stroke-linecap="round"/><path d="M219.6 395.4 Q226.6 392.2 237.5 393.0 T255.5 390.6" fill="none" stroke="#ffd0c0" stroke-width="1.6" stroke-opacity=".5" stroke-linecap="round"/></g></g><path d="M207.9 123.1 l6.7 -3.4" stroke="#9c6a56" stroke-width="1.6" stroke-linecap="round" opacity=".8"/><path d="M211.0 124.4 l3.1 -1.4" stroke="#9c6a56" stroke-width="2.4" stroke-linecap="round" opacity=".8"/><path d="M188.8 68.7 l6.1 -3.4" stroke="#9c6a56" stroke-width="2.1" stroke-linecap="round" opacity=".8"/><path d="M156.3 103.9 l7.0 -4.0" stroke="#9c6a56" stroke-width="2.5" stroke-linecap="round" opacity=".8"/><path d="M198.2 70.8 l7.1 -3.4" stroke="#9c6a56" stroke-width="2.5" stroke-linecap="round" opacity=".8"/><path d="M221.7 84.0 l6.8 -1.9" stroke="#9c6a56" stroke-width="1.9" stroke-linecap="round" opacity=".8"/><path d="M199.0 101.9 l4.7 -3.1" stroke="#9c6a56" stroke-width="1.4" stroke-linecap="round" opacity=".8"/><path d="M182.2 127.2 l6.1 -4.1" stroke="#9c6a56" stroke-width="2.5" stroke-linecap="round" opacity=".8"/><path d="M192.0 92.2 l6.3 -2.7" stroke="#9c6a56" stroke-width="2.0" stroke-linecap="round" opacity=".8"/><path d="M165.7 133.2 l6.2 -2.2" stroke="#9c6a56" stroke-width="2.3" stroke-linecap="round" opacity=".8"/><path d="M200.5 104.9 l6.1 -2.0" stroke="#9c6a56" stroke-width="1.7" stroke-linecap="round" opacity=".8"/><path d="M197.7 106.3 l4.0 -3.5" stroke="#9c6a56" stroke-width="1.5" stroke-linecap="round" opacity=".8"/><path d="M199.3 144.8 l5.8 -3.0" stroke="#9c6a56" stroke-width="2.6" stroke-linecap="round" opacity=".8"/><path d="M159.6 86.9 l6.2 -1.8" stroke="#9c6a56" stroke-width="1.5" stroke-linecap="round" opacity=".8"/><path d="M172.1 85.8 l3.2 -1.3" stroke="#9c6a56" stroke-width="1.6" stroke-linecap="round" opacity=".8"/><path d="M192.2 106.3 l5.5 -2.6" stroke="#9c6a56" stroke-width="1.5" stroke-linecap="round" opacity=".8"/><path d="M216.9 98.7 l5.6 -2.6" stroke="#9c6a56" stroke-width="1.8" stroke-linecap="round" opacity=".8"/><path d="M193.1 133.1 l5.8 -3.9" stroke="#9c6a56" stroke-width="2.3" stroke-linecap="round" opacity=".8"/><path d="M199.3 105.6 l4.2 -4.8" stroke="#9c6a56" stroke-width="1.6" stroke-linecap="round" opacity=".8"/><path d="M200.0 87.8 l7.5 -2.0" stroke="#9c6a56" stroke-width="1.5" stroke-linecap="round" opacity=".8"/><path d="M240.9 101.9 l3.4 -1.4" stroke="#9c6a56" stroke-width="1.9" stroke-linecap="round" opacity=".8"/><path d="M157.1 111.1 l4.2 -2.9" stroke="#9c6a56" stroke-width="2.5" stroke-linecap="round" opacity=".8"/><path d="M195.9 84.7 l7.9 -1.7" stroke="#9c6a56" stroke-width="2.1" stroke-linecap="round" opacity=".8"/><path d="M220.1 123.2 l5.3 -4.2" stroke="#9c6a56" stroke-width="1.5" stroke-linecap="round" opacity=".8"/><path d="M194.1 104.0 l5.2 -2.3" stroke="#9c6a56" stroke-width="1.9" stroke-linecap="round" opacity=".8"/><path d="M197.6 130.5 l5.1 -1.9" stroke="#9c6a56" stroke-width="2.0" stroke-linecap="round" opacity=".8"/><path d="M225.0 37.0 L230.7 34.9 L236.0 38.0 L241.7 35.9 L247.0 39.0 L252.0 38.5 L254.7 42.7 L259.6 42.2 L262.3 46.3 L267.3 45.8 L270.0 50.0 L275.0 50.4 L277.0 55.0 L282.0 55.4 L284.0 60.0 L288.5 62.7 L288.5 68.0 L293.0 70.7 L293.0 76.0 L294.5 80.6 L291.0 84.0 L292.5 88.6 L289.0 92.0 L283.6 93.3 L279.5 89.5 L274.1 90.8 L270.0 87.0 L267.1 92.6 L261.0 94.0 L258.1 99.6 L252.0 101.0 L246.2 95.2 L245.0 87.0 L241.9 82.0 L244.0 76.5 L240.9 71.5 L243.0 66.0 L238.1 64.5 L237.0 59.5 L232.1 58.0 L231.0 53.0 L227.1 49.9 L228.0 45.0 L224.1 41.9Z" fill="url(#glf)"/><path d="M228 40 L286 88 M250 58 L249 94 M262 68 L284 66" stroke="#2a8a28" stroke-width="1.5" fill="none" opacity=".7"/><path d="M330.0 181.0 L332.6 175.8 L338.3 174.7 L340.9 169.4 L346.7 168.3 L349.3 163.1 L355.0 162.0 L358.8 166.6 L357.5 172.5 L361.3 177.1 L360.0 183.0 L361.8 188.2 L358.5 192.5 L360.3 197.7 L357.0 202.0 L356.4 209.6 L351.0 215.0 L350.2 219.9 L345.5 221.5 L344.7 226.4 L340.0 228.0 L334.2 225.8 L332.0 220.0 L327.2 218.1 L326.5 213.0 L321.7 211.1 L321.0 206.0 L316.2 204.6 L315.2 199.8 L310.5 198.4 L309.5 193.5 L304.7 192.1 L303.8 187.2 L299.0 185.9 L298.0 181.0 L301.5 177.3 L306.5 178.5 L310.0 174.8 L315.0 176.0 L323.3 176.0Z" fill="url(#glf)"/><path d="M352 168 L338 222 M346 192 L318 182" stroke="#2a8a28" stroke-width="1.5" fill="none" opacity=".7"/><g filter="url(#rough)"><path d="M290 311 L305 297 L330 284.5 L344 302 L344 338 L337 346 L321 343 L300 329 Z" fill="#ef3834" stroke="#ef3834" stroke-width="3" stroke-linejoin="round"/><path d="M308 312 L328 298 L336 312 L334 334 L322 334 Z" fill="#fcb8ac" opacity=".9"/><path d="M318 312 L330 304 M322 322 L333 318 M316 320 L322 328" stroke="#ef3a34" stroke-width="2" opacity=".7"/><path d="M289 313 L292 292 L304 288 L312 278 L326 282 L322 290 L308 298 L298 312 Z" fill="#70b53a"/></g></symbol></defs></svg>
<div class="a" style="left:0px;top:0px;width:1920px;height:81px;background:#b7472a;"></div>
<div class="a" style="left:773px;top:0px;width:86px;height:43px;background:#8e3620;"></div>
<div class="a" style="left:773px;top:43px;width:86px;height:38px;background:#f3f3f3;"></div>
<div class="a" style="left:809px;top:0px;width:60px;height:1px;background:#e81123;"></div>
<div class="a" style="left:869px;top:0px;width:241px;height:1px;background:#2b2b2b;"></div>
<div class="a" style="left:0px;top:81px;width:1920px;height:114px;background:#f3f3f3;"></div>
<div class="a" style="left:0px;top:195px;width:1920px;height:1px;background:#d0d0d0;"></div>
<div class="a" style="left:0px;top:196px;width:1920px;height:808px;background:#e6e6e6;"></div>
<div class="a" style="left:290px;top:195px;width:1px;height:806px;background:#c6c6c6;"></div>
<div class="a" style="left:291px;top:1000px;width:1629px;height:1px;background:#cfcfcf;"></div>
<div class="a" style="left:0px;top:1003px;width:1920px;height:1px;background:#d0d0d0;"></div>
<div class="a" style="left:0px;top:1004px;width:1920px;height:22px;background:#f3f3f3;"></div>
<div class="a" style="left:409px;top:209px;width:1375px;height:775px;background:#ffffff;box-sizing:border-box;border:1px solid #c3c3c3;"></div>
<div class="a" style="left:1900px;top:198px;width:19px;height:734px;background:#dcdcdc;"></div>
<div class="a" style="left:1900px;top:198.3px;width:19px;height:18px;background:#ffffff;box-sizing:border-box;border:1px solid #cfcfcf;"></div>
<div class="a" style="left:1900px;top:449px;width:19px;height:232px;background:#ffffff;box-sizing:border-box;border:1px solid #ababab;"></div>
<div class="a" style="left:1900px;top:913.5px;width:19px;height:18.3px;background:#ffffff;box-sizing:border-box;border:1px solid #cfcfcf;"></div>
<svg class="a" style="left:860px;top:470px" width="440" height="430"><use href="#ice"/></svg>
<svg width="0" height="0" style="position:absolute"><defs><pattern id="tex" width="3" height="2.6" patternUnits="userSpaceOnUse"><path d="M0 0.4H3M0.5 0V2.6" stroke="#fff" stroke-width="0.6" opacity=".4"/><path d="M1.8 1.2V2.4" stroke="#1f4e8c" stroke-width="0.8" opacity=".5"/></pattern></defs></svg>
<div class="a" style="left:237.4px;top:84px;width:58.4px;height:87px;background:#c6c6c6;"></div>
<svg class="a" style="left:34px;top:89px;" width="36" height="38" viewBox="0 0 36 38"><rect x="0.5" y="1.5" width="35" height="35" fill="#fff" stroke="#7f7f7f" stroke-width="1"/><clipPath id="cl34"><rect x="2" y="3" width="14.2" height="32"/></clipPath><clipPath id="cr34"><rect x="19.2" y="3" width="14.8" height="32"/></clipPath><g clip-path="url(#cl34)"><rect x="2" y="3" width="32" height="32" fill="#4f81bd"/><path d="M2 16.439999999999998 Q4.5600000000000005 12.6 8.4 12.6 Q10.32 6.2 15.44 8.120000000000001 Q18.0 4.6 21.84 8.440000000000001 Q27.6 6.84 29.52 11.32 Q32.72 11.32 34 13.88 V28.6 H2 Z" fill="#fff"/><path d="M2 26.04 Q8.4 25.4 12.88 20.6 Q15.44 17.72 18.0 19.64 Q20.56 19.0 23.12 16.439999999999998 Q26.32 13.88 28.88 15.8 Q32.08 12.6 34 16.439999999999998 V27.32 H2 Z" fill="#79a897"/><rect x="2" y="26.84" width="32" height="1.44" fill="#fff"/><rect x="2" y="28.28" width="32" height="6.72" fill="#4f81bd"/></g><g clip-path="url(#cr34)"><rect x="2" y="3" width="32" height="32" fill="#fff"/><path d="M2 26.04 Q8.4 25.4 12.88 20.6 Q15.44 17.72 18.0 19.64 Q20.56 19.0 23.12 16.439999999999998 Q26.32 13.88 28.88 15.8 Q32.08 12.6 34 16.439999999999998 V27.32 H2 Z" fill="#79a897"/><rect x="2" y="26.84" width="32" height="1.44" fill="#fff"/><rect x="2" y="28.28" width="32" height="6.72" fill="#4f81bd"/></g><path d="M17.6 0V38" stroke="#555" stroke-width="1" stroke-dasharray="2 1.3"/></svg>
<svg class="a" style="left:248px;top:89px;" width="36" height="38" viewBox="0 0 36 38"><rect x="0.5" y="1.5" width="35" height="35" fill="#fff" stroke="#7f7f7f" stroke-width="1"/><clipPath id="cl248"><rect x="2" y="3" width="14.2" height="32"/></clipPath><clipPath id="cr248"><rect x="19.2" y="3" width="14.8" height="32"/></clipPath><g clip-path="url(#cl248)"><rect x="2" y="3" width="32" height="32" fill="#4f81bd"/><path d="M2 16.439999999999998 Q4.5600000000000005 12.6 8.4 12.6 Q10.32 6.2 15.44 8.120000000000001 Q18.0 4.6 21.84 8.440000000000001 Q27.6 6.84 29.52 11.32 Q32.72 11.32 34 13.88 V28.6 H2 Z" fill="#fff"/><path d="M2 26.04 Q8.4 25.4 12.88 20.6 Q15.44 17.72 18.0 19.64 Q20.56 19.0 23.12 16.439999999999998 Q26.32 13.88 28.88 15.8 Q32.08 12.6 34 16.439999999999998 V27.32 H2 Z" fill="#79a897"/><rect x="2" y="26.84" width="32" height="1.44" fill="#fff"/><rect x="2" y="28.28" width="32" height="6.72" fill="#4f81bd"/></g><g clip-path="url(#cr248)"><rect x="2" y="3" width="32" height="32" fill="#4f81bd"/><path d="M2 16.439999999999998 Q4.5600000000000005 12.6 8.4 12.6 Q10.32 6.2 15.44 8.120000000000001 Q18.0 4.6 21.84 8.440000000000001 Q27.6 6.84 29.52 11.32 Q32.72 11.32 34 13.88 V28.6 H2 Z" fill="#fff"/><path d="M2 26.04 Q8.4 25.4 12.88 20.6 Q15.44 17.72 18.0 19.64 Q20.56 19.0 23.12 16.439999999999998 Q26.32 13.88 28.88 15.8 Q32.08 12.6 34 16.439999999999998 V27.32 H2 Z" fill="#79a897"/><rect x="2" y="26.84" width="32" height="1.44" fill="#fff"/><rect x="2" y="28.28" width="32" height="6.72" fill="#4f81bd"/><rect x="19" y="3" width="15" height="32" fill="url(#tex)"/></g><path d="M17.6 0V38" stroke="#555" stroke-width="1" stroke-dasharray="2 1.3"/></svg>
<div class="a" style="left:99px;top:94px;width:1px;height:68px;background:#d0d0d0;"></div>
<svg class="a" style="left:124.9px;top:88px;" width="40" height="40" viewBox="0 0 40 40"><circle cx="20" cy="20" r="10" fill="#f0c878"/><rect x="18.05" y="3.1" width="3.9" height="5.3" fill="#f0c878" transform="rotate(0 20 20)"/><rect x="18.05" y="3.1" width="3.9" height="5.3" fill="#f0c878" transform="rotate(45 20 20)"/><rect x="18.05" y="3.1" width="3.9" height="5.3" fill="#f0c878" transform="rotate(90 20 20)"/><rect x="18.05" y="3.1" width="3.9" height="5.3" fill="#f0c878" transform="rotate(135 20 20)"/><rect x="18.05" y="3.1" width="3.9" height="5.3" fill="#f0c878" transform="rotate(180 20 20)"/><rect x="18.05" y="3.1" width="3.9" height="5.3" fill="#f0c878" transform="rotate(225 20 20)"/><rect x="18.05" y="3.1" width="3.9" height="5.3" fill="#f0c878" transform="rotate(270 20 20)"/><rect x="18.05" y="3.1" width="3.9" height="5.3" fill="#f0c878" transform="rotate(315 20 20)"/></svg>
<svg class="a" style="left:193px;top:90px;" width="36" height="36" viewBox="0 0 36 36"><rect x="0.65" y="0.65" width="34.7" height="34.7" fill="#c5d5ea" stroke="#4f81bd" stroke-width="1.3"/><circle cx="27" cy="8.9" r="3.7" fill="#4f81bd"/><path d="M2.9 33V27.2L12.6 17.6L28.6 33Z" fill="#4f81bd"/><path d="M20.6 22.8L24.2 19.4L33.2 28.2V33H30.8Z" fill="#4f81bd"/></svg>
<svg class="a" style="left:141.4px;top:159.0px;" width="6.2" height="3.4" viewBox="0 0 6.2 3.4"><path d="M0 0 L6.2 0 L3.1 3.3 Z" fill="#5a5a5a"/></svg>
<svg class="a" style="left:207.9px;top:159.0px;" width="6.2" height="3.4" viewBox="0 0 6.2 3.4"><path d="M0 0 L6.2 0 L3.1 3.3 Z" fill="#5a5a5a"/></svg>
<svg class="a" style="left:287.0px;top:159.0px;" width="6.2" height="3.4" viewBox="0 0 6.2 3.4"><path d="M0 0 L6.2 0 L3.1 3.3 Z" fill="#5a5a5a"/></svg>
<svg class="a" style="left:426.9px;top:126.0px;" width="6.2" height="3.4" viewBox="0 0 6.2 3.4"><path d="M0 0 L6.2 0 L3.1 3.3 Z" fill="#5a5a5a"/></svg>
<svg class="a" style="left:421.7px;top:155.1px;" width="6.2" height="3.4" viewBox="0 0 6.2 3.4"><path d="M0 0 L6.2 0 L3.1 3.3 Z" fill="#5a5a5a"/></svg>
<svg class="a" style="left:1184.9px;top:97.0px;" width="6.2" height="3.4" viewBox="0 0 6.2 3.4"><path d="M0 0 L6.2 0 L3.1 3.3 Z" fill="#5a5a5a"/></svg>
<svg class="a" style="left:1183.9px;top:126.0px;" width="6.2" height="3.4" viewBox="0 0 6.2 3.4"><path d="M0 0 L6.2 0 L3.1 3.3 Z" fill="#5a5a5a"/></svg>
<svg class="a" style="left:1183.9px;top:155.1px;" width="6.2" height="3.4" viewBox="0 0 6.2 3.4"><path d="M0 0 L6.2 0 L3.1 3.3 Z" fill="#5a5a5a"/></svg>
<svg class="a" style="left:1355.65px;top:159.0px;" width="6.2" height="3.4" viewBox="0 0 6.2 3.4"><path d="M0 0 L6.2 0 L3.1 3.3 Z" fill="#5a5a5a"/></svg>
<svg class="a" style="left:1434.9px;top:159.0px;" width="6.2" height="3.4" viewBox="0 0 6.2 3.4"><path d="M0 0 L6.2 0 L3.1 3.3 Z" fill="#5a5a5a"/></svg>
<svg class="a" style="left:1576.4px;top:97.0px;" width="6.2" height="3.4" viewBox="0 0 6.2 3.4"><path d="M0 0 L6.2 0 L3.1 3.3 Z" fill="#5a5a5a"/></svg>
<svg class="a" style="left:1585.65px;top:155.1px;" width="6.2" height="3.4" viewBox="0 0 6.2 3.4"><path d="M0 0 L6.2 0 L3.1 3.3 Z" fill="#5a5a5a"/></svg>
<svg class="a" style="left:1643.9px;top:159.29999999999998px;" width="6.2" height="3.4" viewBox="0 0 6.2 3.4"><path d="M0 0 L6.2 0 L3.1 3.3 Z" fill="#5a5a5a"/></svg>
<svg class="a" style="left:1582.9px;top:126.0px;" width="6.2" height="3.4" viewBox="0 0 6.2 3.4"><path d="M0 0 L6.2 0 L3.1 3.3 Z" fill="#b0b0b0"/></svg>
<svg class="a" style="left:300px;top:88px;" width="19" height="19" viewBox="0 0 19 19"><g transform="translate(3.6 3.4)"><rect x="0.5" y="0.5" width="11.2" height="10.6" fill="#fff" stroke="#7f7f7f" stroke-width="1"/><circle cx="8.052" cy="3.48" r="1.4" fill="#f0b050"/><path d="M1.464 9.744L4.636 4.872L7.808 9.744Z M6.832 7.4239999999999995L8.54 5.8L10.98 9.744H8.296Z" fill="#4f81bd"/></g><path d="M0.4 0.4L3.0 3.0M3.1999999999999997 0.7V3.1999999999999997H0.7" fill="none" stroke="#2e75b6" stroke-width="1.1"/><path d="M18.6 0.4L16.0 3.0M15.8 0.7V3.1999999999999997H18.3" fill="none" stroke="#2e75b6" stroke-width="1.1"/><path d="M0.4 18.6L3.0 16.0M3.1999999999999997 18.3V15.8H0.7" fill="none" stroke="#2e75b6" stroke-width="1.1"/><path d="M18.6 18.6L16.0 16.0M15.8 18.3V15.8H18.3" fill="none" stroke="#2e75b6" stroke-width="1.1"/></svg>
<svg class="a" style="left:300px;top:118px;" width="20" height="18" viewBox="0 0 20 18"><rect x="0.5" y="0.5" width="10" height="9.4" fill="#fff" stroke="#7f7f7f" stroke-width="1"/><path d="M2 2H4.5V3.4H2ZM6.5 2H9V3.4H6.5Z" fill="#4f81bd"/><path d="M2 8.6V7.2Q4 7 5.4 5.4Q6.6 4.6 9 5V8.6Z" fill="#79a897"/><g transform="translate(9.4 7.4)"><rect x="0.5" y="0.5" width="9.4" height="9.2" fill="#fff" stroke="#7f7f7f" stroke-width="1"/><circle cx="6.864000000000001" cy="3.0599999999999996" r="1.4" fill="#f0b050"/><path d="M1.248 8.568L3.9520000000000004 4.284L6.656000000000001 8.568Z M5.824000000000001 6.528L7.279999999999999 5.1L9.360000000000001 8.568H7.072000000000001Z" fill="#4f81bd"/></g><path d="M2.2 11.2Q2.6 15.2 6.8 15" fill="none" stroke="#2e75b6" stroke-width="1.2"/><path d="M5.6 12.6L8.2 15L5.6 17.2" fill="none" stroke="#2e75b6" stroke-width="1.2"/></svg>
<svg class="a" style="left:300.7px;top:147px;" width="19" height="15.5" viewBox="0 0 19 15.5"><g transform="translate(7.6 3.8)"><rect x="0.5" y="0.5" width="9.4" height="9.8" fill="#fff" stroke="#7f7f7f" stroke-width="1"/><circle cx="6.864000000000001" cy="3.24" r="1.4" fill="#f0b050"/><path d="M1.248 9.072000000000001L3.9520000000000004 4.5360000000000005L6.656000000000001 9.072000000000001Z M5.824000000000001 6.912000000000001L7.279999999999999 5.4L9.360000000000001 9.072000000000001H7.072000000000001Z" fill="#4f81bd"/></g><path d="M2 7.4Q2.6 1.6 8 1.2Q11.4 1.2 12.6 3.6" fill="none" stroke="#2e75b6" stroke-width="1.7"/><path d="M0 3.6L2 8.4L5.6 5.2Z" fill="#2e75b6"/></svg>
<div class="a" style="left:462.0px;top:86px;width:1px;height:104px;background:#c8c8c8;"></div>
<div class="a" style="left:1208.25px;top:86px;width:1px;height:104px;background:#c8c8c8;"></div>
<div class="a" style="left:1284.5px;top:86px;width:1px;height:104px;background:#c8c8c8;"></div>
<div class="a" style="left:1609.5px;top:86px;width:1px;height:104px;background:#c8c8c8;"></div>
<div class="a" style="left:1855.1px;top:86px;width:1px;height:104px;background:#c8c8c8;"></div>
<svg class="a" style="left:1904.9px;top:204.6px;" width="9.4" height="5.2" viewBox="0 0 9.4 5.2"><path d="M0 5.2H9.4L4.7 0Z" fill="#777"/></svg>
<svg class="a" style="left:1904.9px;top:920px;" width="9.4" height="5.2" viewBox="0 0 9.4 5.2"><path d="M0 0H9.4L4.7 5.2Z" fill="#777"/></svg>
<svg class="a" style="left:1904.9px;top:937.9px;" width="9.4" height="10.2" viewBox="0 0 9.4 10.2"><path d="M0 5H9.4L4.7 0Z M0 10.2H9.4L4.7 5.2Z" fill="#777"/></svg>
<svg class="a" style="left:1904.9px;top:960px;" width="9.4" height="10.2" viewBox="0 0 9.4 10.2"><path d="M0 0H9.4L4.7 5Z M0 5.2H9.4L4.7 10.2Z" fill="#777"/></svg>
<svg class="a" style="left:100px;top:1009px;" width="18" height="15" viewBox="0 0 18 15"><path d="M0.6 0.8H8V12.6H0.6Z" fill="none" stroke="#6a6a6a" stroke-width="1"/><path d="M8 0.8H17V4.5M17 10V12.6H8" fill="none" stroke="#6a6a6a" stroke-width="1"/><path d="M6.2 12.8L8 14.6L9.8 12.8" fill="none" stroke="#6a6a6a" stroke-width="1"/><path d="M10.6 6.8L12.8 9.2L17.2 3.8" fill="none" stroke="#6a6a6a" stroke-width="1.3"/></svg>
<svg class="a" style="left:1289px;top:1010px;" width="13" height="13" viewBox="0 0 13 13"><path d="M6.4 0.6L9.6 4H3.2Z" fill="#6a6a6a"/><path d="M0 6.3H12.8M0 9.3H12.8M0 12.2H7.4" stroke="#6a6a6a" stroke-width="1.1"/></svg>
<svg class="a" style="left:1368.3px;top:1009.3px;" width="17.6" height="15" viewBox="0 0 17.6 15"><path d="M1.6 0H16Q17.6 0 17.6 1.6V9.4Q17.6 11 16 11H8L4.4 14.8V11H1.6Q0 11 0 9.4V1.6Q0 0 1.6 0Z" fill="#6a6a6a"/></svg>
<div class="a" style="left:1475px;top:1004px;width:50px;height:22px;background:#c6c6c6;"></div>
<svg class="a" style="left:1491.3px;top:1009.3px;" width="17" height="15.6" viewBox="0 0 17 15.6"><rect x="0.5" y="0.5" width="15.8" height="14.4" fill="none" stroke="#6a6a6a" stroke-width="1"/><path d="M4.2 0.5V15M4.2 11H16.3" stroke="#6a6a6a" stroke-width="1"/><rect x="7.3" y="3.3" width="6.2" height="4.4" fill="none" stroke="#6a6a6a" stroke-width="1"/></svg>
<svg class="a" style="left:1540.8px;top:1009.3px;" width="16.4" height="15" viewBox="0 0 16.4 15"><rect x="0.5" y="0.5" width="6" height="5" fill="none" stroke="#6a6a6a" stroke-width="1"/><rect x="9.7" y="0.5" width="6" height="5" fill="none" stroke="#6a6a6a" stroke-width="1"/><rect x="0.5" y="9.1" width="6" height="5" fill="none" stroke="#6a6a6a" stroke-width="1"/><rect x="9.7" y="9.1" width="6" height="5" fill="none" stroke="#6a6a6a" stroke-width="1"/></svg>
<svg class="a" style="left:1591px;top:1008.7px;" width="17.4" height="15" viewBox="0 0 17.4 15"><path d="M0.5 0.9H7.6Q8.6 0.9 8.6 2V13.4Q8.4 12.4 7.4 12.4H0.5Z M16.8 0.9H9.7Q8.7 0.9 8.7 2V13.4Q8.9 12.4 9.9 12.4H16.8Z" fill="none" stroke="#6a6a6a" stroke-width="1"/><path d="M2.2 3.4H6.6M2.2 5.6H6.6M2.2 7.8H6.6M2.2 10H6.6M10.8 3.4H15.2M10.8 5.6H15.2M10.8 7.8H15.2M10.8 10H15.2" stroke="#6a6a6a" stroke-width=".8"/><path d="M7.2 12.8L8.65 14.4L10.1 12.8" fill="none" stroke="#6a6a6a" stroke-width=".9"/></svg>
<svg class="a" style="left:1641.1px;top:1008.7px;" width="17" height="15.4" viewBox="0 0 17 15.4"><path d="M0 0.8H16.8" stroke="#6a6a6a" stroke-width="1.6"/><path d="M2.4 1.6V8.6H14.4V1.6" fill="none" stroke="#6a6a6a" stroke-width="1"/><path d="M5 4.4H11.8" stroke="#6a6a6a" stroke-width="1"/><path d="M8.4 8.6V14.2M5.6 14.6H11.2" stroke="#6a6a6a" stroke-width="1"/></svg>
<div class="a" style="left:1682.2px;top:1016px;width:9.4px;height:1.2px;background:#555;"></div>
<div class="a" style="left:1698.3px;top:1016.8px;width:124.3px;height:1px;background:#a6a6a6;"></div>
<div class="a" style="left:1760px;top:1013.7px;width:1px;height:7.2px;background:#a6a6a6;"></div>
<div class="a" style="left:1749.1px;top:1010.2px;width:5.9px;height:13.6px;background:#666;"></div>
<div class="a" style="left:1828.8px;top:1016.1px;width:9.7px;height:1.2px;background:#555;"></div>
<div class="a" style="left:1833.05px;top:1011.8px;width:1.2px;height:9.8px;background:#555;"></div>
<svg class="a" style="left:1897.9px;top:1010.2px;" width="13" height="12.8" viewBox="0 0 13 12.8"><rect x="0.5" y="0.5" width="12" height="11.8" fill="none" stroke="#6a6a6a" stroke-width="1"/><path d="M6.5 1.6V4.6M5.2 2.9L6.5 1.6L7.8 2.9M6.5 11.2V8.2M5.2 9.9L6.5 11.2L7.8 9.9M1.6 6.4H4.6M2.9 5.1L1.6 6.4L2.9 7.7M11.4 6.4H8.4M10.1 5.1L11.4 6.4L10.1 7.7" fill="none" stroke="#6a6a6a" stroke-width=".8"/></svg>
<svg class="a" style="left:1063px;top:88.6px;" width="20" height="19.2" viewBox="0 0 20 19.2"><path d="M6.5 1.2H0.8V12" fill="none" stroke="#7f7f7f" stroke-width="1.1"/><path d="M17.2 0.6L19.4 2.8L9.2 13L6.2 13.8L7 10.8Z" fill="#4f81bd"/><path d="M15.8 2L18 4.2" stroke="#fff" stroke-width=".7"/><rect x="0" y="14.4" width="20" height="4.7" fill="#92c020"/></svg>
<svg class="a" style="left:1063.8px;top:119.2px;" width="18" height="15" viewBox="0 0 18 15"><defs><linearGradient id="peg" x1="0" y1="0" x2="0" y2="1"><stop offset="0" stop-color="#fdfdfd"/><stop offset="1" stop-color="#e4e4e4"/></linearGradient></defs><path d="M4.6 0.8H14.6Q17.2 0.8 17.4 3.4L17 9.6Q16.6 12 14.8 13.6Q13.6 14.6 11.6 14.4L3.4 13.4Q0.4 12.8 0.6 10L2.2 2.8Q2.8 0.8 4.6 0.8Z" fill="#8c8c8c"/><path d="M5 1.6H14.4Q16.4 1.8 16.2 3.6L13.8 9Q13.2 10.4 11.4 10.4L2.6 10.2Q1.2 10 1.6 8.6L3.2 2.8Q3.8 1.6 5 1.6Z" fill="url(#peg)"/></svg>
<svg class="a" style="left:1063.8px;top:146.5px;" width="19.4" height="18.6" viewBox="0 0 19.4 18.6"><rect x="0.5" y="0.5" width="12" height="11.4" fill="#fff" stroke="#7f7f7f" stroke-width="1"/><circle cx="8.6" cy="3.8" r="1.3" fill="#f0b050"/><path d="M2 10L5.4 5.6L8 8.4L9 7.4L11.2 10Z" fill="#4f81bd"/><path d="M13.6 1.4Q16.6 1.8 16.8 5.4" fill="none" stroke="#2e75b6" stroke-width="1.2"/><path d="M14.6 4.2L16.8 6.6L18.8 4.2" fill="none" stroke="#2e75b6" stroke-width="1.2"/><path d="M5.4 10.4H14.4V12H11.8V14.4H14V16H5.8V14.4H8.2V12H5.4Z" fill="#5f9e8b"/><rect x="11.4" y="13.4" width="6.8" height="4.6" fill="#fff" stroke="#7f7f7f" stroke-width="1"/><path d="M13 15.7H16.6" stroke="#7f7f7f" stroke-width=".8"/></svg>
<svg class="a" style="left:1229px;top:90.2px;" width="38" height="37.6" viewBox="0 0 38 37.6"><rect x="0.5" y="0.5" width="35.4" height="35.2" fill="#fff" stroke="#7f7f7f" stroke-width="1"/><circle cx="27" cy="9" r="3.6" fill="#f0c878"/><path d="M3.2 32.2V26.6L12.2 18L18.4 24L22.8 19.6L30 26.6V32.2Z" fill="#4f81bd"/><path d="M17.6 24.8L20.2 27.4" stroke="#fff" stroke-width="1"/><rect x="17.8" y="26.6" width="19.4" height="10.2" fill="#fff" stroke="#7f7f7f" stroke-width="1"/><path d="M20.4 30.4H34.6M20.4 33.4H34.6" stroke="#a0a0a0" stroke-width=".9"/></svg>
<svg class="a" style="left:1313.8px;top:91px;" width="32.5" height="34" viewBox="0 0 32.5 34"><rect x="13.7" y="15.7" width="17.8" height="17.6" fill="#fff" stroke="#7f7f7f" stroke-width="1"/><rect x="0" y="0" width="26.2" height="26.1" fill="#f0c878"/></svg>
<svg class="a" style="left:1388px;top:91px;" width="32.5" height="34" viewBox="0 0 32.5 34"><rect x="0" y="0" width="26.1" height="26.1" fill="#f0c878"/><rect x="13.8" y="15.7" width="17.5" height="17.6" fill="#fff" stroke="#7f7f7f" stroke-width="1"/></svg>
<svg class="a" style="left:1461px;top:90.2px;" width="32.5" height="36" viewBox="0 0 32.5 36"><rect x="0.5" y="0.5" width="15.2" height="13.6" fill="#fff" stroke="#7f7f7f" stroke-width="1"/><rect x="10.9" y="9.4" width="15" height="15.2" fill="#f0c878"/><rect x="0.5" y="18.4" width="15.2" height="14.8" fill="#fff" stroke="#7f7f7f" stroke-width="1"/><path d="M21.8 18.4V32.4L25 29.4L27.4 34.8L29.6 33.8L27.2 28.6H31.4Z" fill="#fff" stroke="#6a6a6a" stroke-width="1" stroke-linejoin="round"/></svg>
<svg class="a" style="left:1517px;top:89px;" width="14.2" height="18.6" viewBox="0 0 14.2 18.6"><path d="M0.7 0V18.4" stroke="#7f7f7f" stroke-width="1"/><rect x="2.8" y="0.9" width="6.6" height="2.4" fill="#fff" stroke="#7f7f7f" stroke-width=".9"/><rect x="2.3" y="5.2" width="11.7" height="5.4" fill="#f0c878"/><path d="M2 15H10.6M5.6 11.8L2.2 15L5.6 18.2" fill="none" stroke="#2e75b6" stroke-width="1.5"/></svg>
<svg class="a" style="left:1515px;top:118px;" width="18" height="18" viewBox="0 0 18 18"><rect x="1.2" y="1.2" width="15.6" height="15.6" fill="none" stroke="#c9c3c6" stroke-width=".9" stroke-dasharray="1.6 1.2"/><rect x="3.4" y="3.4" width="8" height="8" fill="#f0ecee" stroke="#c9c3c6" stroke-width="1"/><rect x="6.8" y="6.8" width="8" height="8" fill="none" stroke="#c9c3c6" stroke-width="1"/><rect x="0" y="0" width="2.4" height="2.4" fill="#c9c3c6"/><rect x="15.6" y="0" width="2.4" height="2.4" fill="#c9c3c6"/><rect x="0" y="15.6" width="2.4" height="2.4" fill="#c9c3c6"/><rect x="15.6" y="15.6" width="2.4" height="2.4" fill="#c9c3c6"/></svg>
<svg class="a" style="left:1514.1px;top:149.6px;" width="20.2" height="13.6" viewBox="0 0 20.2 13.6"><path d="M0.8 12.6L10.6 5.6V12.6Z" fill="#fff" stroke="#9a9a9a" stroke-width=".9"/><path d="M13 0.8L19.8 12.9H13Z" fill="#6a6a6a"/><path d="M1.6 5Q2.4 1.6 7.4 1.8" fill="none" stroke="#2e75b6" stroke-width="1.2"/><path d="M5.8 0L8 1.9L5.8 3.8" fill="none" stroke="#2e75b6" stroke-width="1.1"/></svg>
<svg class="a" style="left:1630.1px;top:91px;" width="37" height="37" viewBox="0 0 37 37"><path d="M20 0.6H33.5V20.4" fill="none" stroke="#7f7f7f" stroke-width="1" stroke-dasharray="2.6 1.6"/><path d="M0.5 21V33.5H20.6" fill="none" stroke="#7f7f7f" stroke-width="1" stroke-dasharray="2.6 1.6"/><rect x="0.5" y="0.5" width="19.2" height="19.2" fill="#fff" stroke="#7f7f7f" stroke-width="1"/><circle cx="13.9" cy="4.8" r="1.9" fill="#f0b050"/><path d="M2 17.4V14.2L7 9L13 15.4L11 13L13.2 10.6L17.8 15.4V17.4Z" fill="#4f81bd"/><path d="M10.6 12.4L15 17" stroke="#fff" stroke-width=".9"/><path d="M25.3 24.1V36.6M32.5 21V33.8M23.7 25.4H36.8M21 32.5H33.8" stroke="#7a7a7a" stroke-width="2.7" fill="none"/></svg>
<svg class="a" style="left:1677.3px;top:97.8px;" width="18.8" height="19.6" viewBox="0 0 18.8 19.6"><rect x="12.8" y="0.7" width="5" height="18" fill="#fff" stroke="#7f7f7f" stroke-width="1"/><path d="M6.4 0.6H12.4M6.4 18.8H12.4" stroke="#7f7f7f" stroke-width=".8" stroke-dasharray="1 1"/><rect x="2.1" y="8.2" width="3.2" height="3.2" fill="#fff" stroke="#7f7f7f" stroke-width=".9"/><path d="M3.7 6V0.8M0.9 3.6L3.7 0.8L6.5 3.6M3.7 13.6V18.8M0.9 16L3.7 18.8L6.5 16" fill="none" stroke="#2e75b6" stroke-width="1.5"/></svg>
<svg class="a" style="left:1676.8px;top:138.4px;" width="19.2" height="17.6" viewBox="0 0 19.2 17.6"><rect x="0.5" y="0.5" width="18" height="4.6" fill="#fff" stroke="#7f7f7f" stroke-width="1"/><path d="M0.6 5.6V12M18.4 5.6V12" stroke="#7f7f7f" stroke-width=".8" stroke-dasharray="1 1"/><rect x="8" y="12.8" width="3.2" height="3.2" fill="#fff" stroke="#7f7f7f" stroke-width=".9"/><path d="M6 14.4H0.8M3.6 11.6L0.8 14.4L3.6 17.2M13.2 14.4H18.4M15.6 11.6L18.4 14.4L15.6 17.2" fill="none" stroke="#2e75b6" stroke-width="1.5"/></svg>
<div class="a" style="left:1755px;top:94px;width:91px;height:29px;background:#ffffff;box-sizing:border-box;border:1px solid #ababab;"></div>
<div class="a" style="left:1755px;top:133px;width:91px;height:29px;background:#ffffff;box-sizing:border-box;border:1px solid #ababab;"></div>
<svg class="a" style="left:1832.6000000000001px;top:100.4px;" width="5.6" height="3.2" viewBox="0 0 5.6 3.2"><path d="M0 3.2H5.6L2.8 0Z" fill="#444"/></svg>
<svg class="a" style="left:1832.6000000000001px;top:113.80000000000001px;" width="5.6" height="3.2" viewBox="0 0 5.6 3.2"><path d="M0 0H5.6L2.8 3.2Z" fill="#444"/></svg>
<svg class="a" style="left:1832.6000000000001px;top:139.4px;" width="5.6" height="3.2" viewBox="0 0 5.6 3.2"><path d="M0 3.2H5.6L2.8 0Z" fill="#444"/></svg>
<svg class="a" style="left:1832.6000000000001px;top:152.8px;" width="5.6" height="3.2" viewBox="0 0 5.6 3.2"><path d="M0 0H5.6L2.8 3.2Z" fill="#444"/></svg>
<svg class="a" style="left:1194.5px;top:181px;" width="9.4" height="9.4" viewBox="0 0 9.4 9.4"><path d="M0.5 6V0.5H6" fill="none" stroke="#666" stroke-width="1"/><path d="M3 3L8.6 8.6M8.8 4.4V8.8H4.4" fill="none" stroke="#666" stroke-width="1"/></svg>
<svg class="a" style="left:1841px;top:181px;" width="9.4" height="9.4" viewBox="0 0 9.4 9.4"><path d="M0.5 6V0.5H6" fill="none" stroke="#666" stroke-width="1"/><path d="M3 3L8.6 8.6M8.8 4.4V8.8H4.4" fill="none" stroke="#666" stroke-width="1"/></svg>
<svg class="a" style="left:1896.5px;top:183px;" width="14" height="8" viewBox="0 0 14 8"><path d="M0.8 7.4L7 1.2L13.2 7.4" fill="none" stroke="#444" stroke-width="1.2"/></svg>
<div class="a" style="left:474px;top:88px;width:581px;height:75px;background:#ffffff;box-sizing:border-box;border:1px solid #d0d0d0;"></div>
<svg class="a" style="left:474px;top:88px" width="581" height="75" viewBox="474 88 581 75"><defs><filter id="sh1" x="-20%" y="-20%" width="140%" height="150%"><feGaussianBlur stdDeviation="1"/></filter><filter id="soft" x="-10%" y="-10%" width="120%" height="120%"><feGaussianBlur stdDeviation="0.8"/></filter><linearGradient id="refl" x1="0" y1="0" x2="0" y2="1"><stop offset="0" stop-color="#4f81bd" stop-opacity=".55"/><stop offset="0.5" stop-color="#79a897" stop-opacity=".25"/><stop offset="1" stop-color="#fff" stop-opacity="0"/></linearGradient><clipPath id="rc5"><rect x="770.9" y="106.2" width="38.3" height="28.6" rx="3"/></clipPath><mask id="m6"><rect x="841.7" y="107.9" width="37.1" height="27.2" fill="#fff" filter="url(#soft)"/></mask></defs><rect x="490.5" y="106.8" width="40" height="31" fill="#000" opacity=".35" filter="url(#sh1)"/><rect x="490" y="105.9" width="40.2" height="30.9" fill="#fff"/><rect x="492.2" y="107.9" width="35.9" height="27" fill="#4f81bd"/><path d="M492.2 117.62 Q494.354 114.92 496.86699999999996 114.38000000000001 Q497.94399999999996 109.52000000000001 502.252 109.52000000000001 Q505.842 109.79 506.919 113.30000000000001 Q510.15 110.60000000000001 513.74 113.30000000000001 Q519.125 111.14 523.792 113.30000000000001 Q527.023 114.38000000000001 528.1 116.54 V131.12 H492.2 Z" fill="#fff"/><path d="M492.2 130.31 L500.098 125.72 L505.12399999999997 124.10000000000001 L511.945 126.26 L518.048 123.56 L522.356 122.75 L525.587 120.86 L528.1 121.94000000000001 V130.58 H492.2 Z" fill="#79a897"/><rect x="492.2" y="130.58" width="35.9" height="1.485" fill="#fff"/><rect x="492.2" y="132.065" width="35.9" height="2.835" fill="#4f81bd"/><rect x="560" y="106.2" width="40.6" height="31.5" fill="#000" opacity=".3" filter="url(#sh1)"/><rect x="559.8" y="105.6" width="40.7" height="31.5" fill="#fff"/><rect x="563.3" y="109" width="33.6" height="25" fill="#4f81bd"/><path d="M563.3 118.0 Q565.3159999999999 115.5 567.668 115.0 Q568.6759999999999 110.5 572.708 110.5 Q576.068 110.75 577.0759999999999 114.0 Q580.0999999999999 111.5 583.4599999999999 114.0 Q588.5 112.0 592.8679999999999 114.0 Q595.8919999999999 115.0 596.9 117.0 V130.5 H563.3 Z" fill="#fff"/><path d="M563.3 129.75 L570.692 125.5 L575.396 124.0 L581.78 126.0 L587.492 123.5 L591.524 122.75 L594.548 121.0 L596.9 122.0 V130.0 H563.3 Z" fill="#79a897"/><rect x="563.3" y="130.0" width="33.6" height="1.375" fill="#fff"/><rect x="563.3" y="131.375" width="33.6" height="2.625" fill="#4f81bd"/><rect x="629.5" y="106.6" width="41.3" height="32.8" fill="#000" opacity=".35" filter="url(#sh1)"/><rect x="629" y="105.9" width="41.3" height="32.8" fill="#d2d2d2" stroke="#b4b4b4" stroke-width="0.8"/><rect x="635.2" y="112.1" width="29.8" height="20.8" fill="#4f81bd"/><path d="M635.2 119.588 Q636.988 117.508 639.0740000000001 117.092 Q639.9680000000001 113.348 643.5440000000001 113.348 Q646.524 113.556 647.418 116.25999999999999 Q650.1 114.17999999999999 653.08 116.25999999999999 Q657.5500000000001 114.59599999999999 661.4240000000001 116.25999999999999 Q664.106 117.092 665.0 118.756 V129.988 H635.2 Z" fill="#fff"/><path d="M635.2 129.364 L641.7560000000001 125.828 L645.928 124.58 L651.59 126.244 L656.6560000000001 124.16399999999999 L660.2320000000001 123.53999999999999 L662.9140000000001 122.08399999999999 L665.0 122.916 V129.572 H635.2 Z" fill="#79a897"/><rect x="635.2" y="129.572" width="29.8" height="1.1440000000000001" fill="#fff"/><rect x="635.2" y="130.716" width="29.8" height="2.184" fill="#4f81bd"/><rect x="702.2" y="107.6" width="38.1" height="28.6" fill="#000" opacity=".45" filter="url(#sh1)"/><rect x="700.9" y="106.2" width="38.1" height="28.6" fill="#4f81bd"/><path d="M700.9 116.49600000000001 Q703.1859999999999 113.63600000000001 705.853 113.06400000000001 Q706.996 107.916 711.568 107.916 Q715.3779999999999 108.202 716.521 111.92 Q719.9499999999999 109.06 723.76 111.92 Q729.475 109.632 734.428 111.92 Q737.857 113.06400000000001 739.0 115.352 V130.796 H700.9 Z" fill="#fff"/><path d="M700.9 129.938 L709.2819999999999 125.07600000000001 L714.616 123.36 L721.855 125.64800000000001 L728.332 122.78800000000001 L732.904 121.93 L736.333 119.928 L739.0 121.072 V130.224 H700.9 Z" fill="#79a897"/><rect x="700.9" y="130.224" width="38.1" height="1.5730000000000002" fill="#fff"/><rect x="700.9" y="131.797" width="38.1" height="3.003" fill="#4f81bd"/><g clip-path="url(#rc5)"><rect x="770.9" y="106.2" width="38.3" height="28.6" fill="#4f81bd"/><path d="M770.9 116.49600000000001 Q773.198 113.63600000000001 775.879 113.06400000000001 Q777.028 107.916 781.624 107.916 Q785.454 108.202 786.603 111.92 Q790.05 109.06 793.88 111.92 Q799.625 109.632 804.6039999999999 111.92 Q808.0509999999999 113.06400000000001 809.1999999999999 115.352 V130.796 H770.9 Z" fill="#fff"/><path d="M770.9 129.938 L779.326 125.07600000000001 L784.688 123.36 L791.965 125.64800000000001 L798.476 122.78800000000001 L803.072 121.93 L806.519 119.928 L809.1999999999999 121.072 V130.224 H770.9 Z" fill="#79a897"/><rect x="770.9" y="130.224" width="38.3" height="1.5730000000000002" fill="#fff"/><rect x="770.9" y="131.797" width="38.3" height="3.003" fill="#4f81bd"/></g><rect x="770.9" y="135.2" width="38.3" height="8.5" fill="url(#refl)"/><g mask="url(#m6)"><rect x="840.5" y="106.7" width="39.5" height="29.6" fill="#4f81bd"/><path d="M840.5 117.35600000000001 Q842.87 114.396 845.635 113.804 Q846.82 108.476 851.56 108.476 Q855.51 108.772 856.695 112.62 Q860.25 109.66 864.2 112.62 Q870.125 110.25200000000001 875.26 112.62 Q878.815 113.804 880.0 116.172 V132.156 H840.5 Z" fill="#fff"/><path d="M840.5 131.268 L849.19 126.236 L854.72 124.46000000000001 L862.225 126.828 L868.94 123.868 L873.68 122.98 L877.235 120.908 L880.0 122.092 V131.564 H840.5 Z" fill="#79a897"/><rect x="840.5" y="131.564" width="39.5" height="1.6280000000000001" fill="#fff"/><rect x="840.5" y="133.192" width="39.5" height="3.108" fill="#4f81bd"/></g><rect x="908.9" y="105.9" width="42" height="33.1" fill="#000"/><rect x="911.9" y="108.9" width="36" height="27.1" fill="#fff"/><rect x="912.9" y="109.9" width="34" height="25.1" fill="#000"/><rect x="913.9" y="110.9" width="32.4" height="23.1" fill="#4f81bd"/><path d="M913.9 119.21600000000001 Q915.8439999999999 116.906 918.112 116.444 Q919.084 112.286 922.972 112.286 Q926.212 112.51700000000001 927.184 115.52000000000001 Q930.1 113.21000000000001 933.3399999999999 115.52000000000001 Q938.1999999999999 113.67200000000001 942.412 115.52000000000001 Q945.328 116.444 946.3 118.292 V130.76600000000002 H913.9 Z" fill="#fff"/><path d="M913.9 130.073 L921.028 126.14600000000002 L925.564 124.76 L931.72 126.608 L937.228 124.298 L941.116 123.605 L944.0319999999999 121.988 L946.3 122.912 V130.304 H913.9 Z" fill="#79a897"/><rect x="913.9" y="130.304" width="32.4" height="1.2705000000000002" fill="#fff"/><rect x="913.9" y="131.5745" width="32.4" height="2.4255" fill="#4f81bd"/><rect x="980.2" y="107.4" width="42.3" height="33.1" fill="#000" opacity=".4" filter="url(#sh1)"/><rect x="979" y="105.9" width="42.3" height="33.1" fill="#000"/><rect x="985" y="112.1" width="30.2" height="20.6" fill="#4f81bd"/><path d="M985 119.51599999999999 Q986.812 117.45599999999999 988.926 117.044 Q989.832 113.336 993.456 113.336 Q996.476 113.542 997.382 116.22 Q1000.1 114.16 1003.12 116.22 Q1007.65 114.57199999999999 1011.576 116.22 Q1014.294 117.044 1015.2 118.692 V129.816 H985 Z" fill="#fff"/><path d="M985 129.19799999999998 L991.644 125.696 L995.872 124.46 L1001.61 126.108 L1006.744 124.048 L1010.368 123.42999999999999 L1013.086 121.988 L1015.2 122.812 V129.404 H985 Z" fill="#79a897"/><rect x="985" y="129.404" width="30.2" height="1.133" fill="#fff"/><rect x="985" y="130.537" width="30.2" height="2.1630000000000003" fill="#4f81bd"/></svg>
<div class="a" style="left:1036.6px;top:88px;width:18.4px;height:75px;background:#ffffff;box-sizing:border-box;border:1px solid #c9c9c9;"></div>
<div class="a" style="left:1037.6px;top:89px;width:16.4px;height:25.5px;background:#e3e3e3;"></div>
<div class="a" style="left:1037.6px;top:114.2px;width:16.4px;height:1px;background:#c9c9c9;"></div>
<div class="a" style="left:1037.6px;top:138px;width:16.4px;height:1px;background:#c9c9c9;"></div>
<svg class="a" style="left:1042.5px;top:100px;" width="7" height="4" viewBox="0 0 7 4"><path d="M0 3.6H7L3.5 0Z" fill="#c8c8c8"/></svg>
<svg class="a" style="left:1042.5px;top:125.3px;" width="7" height="4" viewBox="0 0 7 4"><path d="M0 0H7L3.5 3.6Z" fill="#777"/></svg>
<svg class="a" style="left:1041.6px;top:147px;" width="8" height="7.5" viewBox="0 0 8 7.5"><path d="M0 0.5H8" stroke="#777" stroke-width="1"/><path d="M0.4 3.2H7.6L4 7Z" fill="#777"/></svg>
<svg class="a" style="left:1280px;top:0" width="640" height="81" viewBox="1280 0 640 81"><g fill="none" stroke="#9d4229" stroke-width="3.2" stroke-linejoin="round">
<path d="M1311 17.9H1522.6"/><circle cx="1306.3" cy="17.9" r="4.6"/><circle cx="1527.6" cy="17.9" r="4.6"/>
<path d="M1532.4 17.9H1558L1606 62.5Q1609 64.5 1614 64.5H1761L1790 31.4H1920"/>
<circle cx="1388.3" cy="41.6" r="4.6"/><path d="M1393 41.6H1510Q1513 41.6 1516 43.5L1584 83"/>
<circle cx="1294.2" cy="77.7" r="4.6"/><path d="M1299 77.7H1416Q1419 77.7 1421 76L1448 56.5Q1450.6 54.7 1454 54.7H1558.5"/><circle cx="1563.3" cy="54.7" r="4.6"/>
<path d="M1568 54.7H1580Q1584 54.7 1587 57L1608 74.5Q1610.5 76.4 1614 76.4H1827L1897 0"/>
<path d="M1843 83L1921 -2"/>
</g>
<circle cx="1330.8" cy="50.8" r="21.3" fill="none" stroke="#9d4229" stroke-width="6.4"/>
<path d="M1317.5 37.5H1336L1330.5 43L1342 55.5L1336 61L1324.5 49L1317.5 56Z" fill="#9d4229"/>
<circle cx="1647.5" cy="21" r="34" fill="none" stroke="#9d4229" stroke-width="7"/>
<path d="M1632 5H1662V33L1654 25L1638 41L1628 33L1646 15Z" fill="#9d4229"/></svg>
<div class="a" style="left:1646.9px;top:4px;width:30px;height:30px;background:#d4d4d4;border-radius:50%;"></div>
<svg class="a" style="left:1710px;top:12px;" width="19" height="14" viewBox="0 0 19 14"><rect x="1.65" y="1.45" width="15.7" height="11.1" fill="none" stroke="#ffffff" stroke-width="1.3"/><path d="M1.6 4.3H17.4" stroke="#ffffff" stroke-width="1.3"/><path d="M9.5 11V6.2M7 8.3L9.5 5.9L12 8.3" fill="none" stroke="#ffffff" stroke-width="1.3"/></svg>
<div class="a" style="left:1770.2px;top:18.8px;width:13.4px;height:1.3px;background:#ffffff;"></div>
<svg class="a" style="left:1827px;top:12px;" width="14" height="14" viewBox="0 0 14 14"><rect x="1.05" y="3.75" width="9.3" height="9.3" fill="none" stroke="#ffffff" stroke-width="1.3"/><path d="M3.7 3.7V1.1H13V10.4H10.4" fill="none" stroke="#ffffff" stroke-width="1.3"/></svg>
<svg class="a" style="left:1884px;top:12px;" width="14" height="14" viewBox="0 0 14 14"><path d="M1.2 1.2L12.8 12.8M12.8 1.2L1.2 12.8" stroke="#ffffff" stroke-width="1.4"/></svg>
<svg class="a" style="left:1832px;top:53px;" width="20" height="21" viewBox="0 0 20 21"><circle cx="9" cy="6.6" r="4.7" fill="none" stroke="#ffffff" stroke-width="1.3"/><path d="M1.6 18.6Q2.4 12.4 8 11.6M10.4 11.6Q12.6 11.9 13.8 13" fill="none" stroke="#ffffff" stroke-width="1.3"/><path d="M14.4 12V18.6M11.1 15.3H17.7" stroke="#ffffff" stroke-width="1.3"/></svg>
<svg class="a" style="left:878px;top:52px;" width="17" height="21" viewBox="0 0 17 21"><path d="M5.6 13.6Q5.6 11.6 4 9.8A5.9 5.9 0 1 1 13 9.8Q11.4 11.6 11.4 13.6Z" fill="none" stroke="#ffffff" stroke-width="1.3"/><path d="M5.8 15.8H11.2M5.8 18H11.2" stroke="#ffffff" stroke-width="1.2"/></svg>
<svg class="a" style="left:27px;top:12px;" width="16.2" height="16.2" viewBox="0 0 16.2 16.2"><path d="M0 0H16.2V16.2H0Z M2.4 1.4V8.4H13.8V1.4Z" fill="#f4f0ee" fill-rule="evenodd"/><rect x="6.8" y="11.6" width="2.4" height="3.2" fill="#b7472a"/><path d="M2.4 10.6V14.8M13.8 10.6V14.8" stroke="#b7472a" stroke-width="0" /></svg>
<svg class="a" style="left:60px;top:12px;" width="21" height="17" viewBox="0 0 21 17"><path d="M8.6 1.4 L2.6 6.8 L8.6 12.2" fill="none" stroke="#f4f0ee" stroke-width="2.7" stroke-linejoin="miter"/><path d="M3.4 6.8 H13 A4.9 4.9 0 0 1 13 16.4 L11.4 16.4" fill="none" stroke="#f4f0ee" stroke-width="2.7"/></svg>
<svg class="a" style="left:86.8px;top:17px;" width="7" height="4" viewBox="0 0 7 4"><path d="M0 0H6.6L3.3 3.4Z" fill="#f4f0ee"/></svg>
<svg class="a" style="left:105px;top:11px;" width="19" height="18" viewBox="0 0 19 18"><path d="M11.6 3.4 A6.9 6.9 0 1 0 16.4 9.2" fill="none" stroke="#f4f0ee" stroke-width="2.6"/><path d="M9 1H18L14.6 3.4V10H11.9V3.6H9Z" fill="#f4f0ee"/></svg>
<svg class="a" style="left:139px;top:10px;" width="21" height="20" viewBox="0 0 21 20"><rect x="0" y="0.5" width="19" height="2" fill="#f4f0ee"/><path d="M2.2 2.5V11.8H9" fill="none" stroke="#f4f0ee" stroke-width="1.6"/><path d="M17 2.5V4.5" stroke="#f4f0ee" stroke-width="1.6"/><path d="M4.6 6.3H10.5M4.6 8.9H9" stroke="#f4f0ee" stroke-width="1.3"/><circle cx="15" cy="9.6" r="4.6" fill="none" stroke="#f4f0ee" stroke-width="1.5"/><path d="M13.5 7.2L17.4 9.6L13.5 12Z" fill="#f4f0ee"/><path d="M9.2 12V15.5M4.8 18.3L7 14.8H11.4L13.6 18.3Z" fill="#f4f0ee" stroke="#f4f0ee" stroke-width="1.2"/></svg>
<svg class="a" style="left:182px;top:19px;" width="6" height="6.5" viewBox="0 0 6 6.5"><rect x="0" y="0" width="5.6" height="1.1" fill="#f4f0ee"/><path d="M0 2.6H5.6L2.8 5.9Z" fill="#f4f0ee"/></svg>
<svg width="0" height="0" style="position:absolute"><defs>
<pattern id="gpat" width="22.4" height="21" patternUnits="userSpaceOnUse" x="47" y="222.5">
<rect width="22.4" height="21" fill="#fff"/>
<g fill="none" stroke="#72a92c" stroke-width="1">
<circle cx="5.6" cy="5.25" r="3.4"/><circle cx="16.8" cy="15.75" r="3.4"/>
<path d="M5.6 -2.6 L13.8 5.25 L5.6 13.1 L-2.6 5.25Z M16.8 7.9 L25 15.75 L16.8 23.6 L8.6 15.75Z" stroke-width="1.1" stroke-opacity=".6"/>
<path d="M5.6 18.4 L13.8 26.25 L5.6 34.1 L-2.6 26.25Z M16.8 -13.1 L25 -5.25 L16.8 2.6 L8.6 -5.25Z M28 -2.6 L36.2 5.25 L28 13.1 L19.8 5.25Z M-5.6 7.9 L2.6 15.75 L-5.6 23.6 L-13.8 15.75Z" stroke-width="1.1" stroke-opacity=".6"/>
</g>
<g fill="#6aa121"><circle cx="5.6" cy="5.25" r="1.3"/><circle cx="16.8" cy="15.75" r="1.3"/>
<path d="M16.8 2.9l1 1.4 1.6-.4-.9 1.35.9 1.35-1.6-.4-1 1.4-1-1.4-1.6.4.9-1.35-.9-1.35 1.6.4z"/>
<path d="M5.6 13.4l1 1.4 1.6-.4-.9 1.35.9 1.35-1.6-.4-1 1.4-1-1.4-1.6.4.9-1.35-.9-1.35 1.6.4z"/>
<circle cx="11.2" cy="5.25" r=".9"/><circle cx="0" cy="5.25" r=".9"/><circle cx="22.4" cy="5.25" r=".9"/><circle cx="11.2" cy="15.75" r=".9"/><circle cx="0" cy="15.75" r=".9"/><circle cx="22.4" cy="15.75" r=".9"/>
<circle cx="5.6" cy="0" r=".8"/><circle cx="5.6" cy="10.5" r=".8"/><circle cx="16.8" cy="10.5" r=".8"/><circle cx="16.8" cy="21" r=".8"/><circle cx="5.6" cy="21" r=".8"/><circle cx="16.8" cy="0" r=".8"/>
</g></pattern></defs></svg>
<div class="a" style="left:44px;top:220px;width:215px;height:124px;background:#fff;box-sizing:border-box;border:1px solid #c2c2c2;"></div>
<svg class="a" style="left:45px;top:221px" width="213" height="82" viewBox="45 221 213 82"><rect x="45" y="221" width="213" height="82" fill="url(#gpat)"/></svg>
<div class="a" style="left:194.2px;top:315px;width:1px;height:16px;background:#8ab833;"></div>
<div class="a" style="left:41px;top:366px;width:221px;height:130px;background:#fff;box-sizing:border-box;border:3px solid #bf4626;"></div>
<div class="a" style="left:59.3px;top:385px;width:1px;height:17px;background:#8ab833;"></div>
<svg class="a" style="left:115.6px;top:412.0px" width="68.8" height="67.2" viewBox="0 0 440 430"><use href="#ice"/></svg>
<div class="a" style="left:44px;top:518px;width:215px;height:124px;background:#fff;box-sizing:border-box;border:1px solid #c2c2c2;"></div>
<div class="a" style="left:59.3px;top:534.5px;width:1px;height:16.5px;background:#8ab833;"></div>
<div class="a" style="left:714px;top:332px;width:6.2px;height:45px;background:#0a0a0a;"></div>
<div class="a" style="left:714px;top:332px;width:16.4px;height:5.4px;background:#0a0a0a;"></div>
<div class="a" style="left:714px;top:350.4px;width:15.4px;height:5.4px;background:#0a0a0a;"></div>
<div class="a" style="left:714px;top:371.6px;width:16.4px;height:5.4px;background:#0a0a0a;"></div>
<span class="t" id="t0" style="left:393px;top:11.34px;font-size:15.6px;line-height:19px;color:#ffffff;letter-spacing:-0.500px;">Presentation1  -  PowerPoint</span>
<span class="t" id="t1" style="left:780.2px;top:12.57px;font-size:13.4px;line-height:16px;color:#f3d9d1;letter-spacing:-0.217px;">Picture Tools</span>
<span class="t" id="t2" style="left:1540.7px;top:10.34px;font-size:15.6px;line-height:19px;color:#ffffff;letter-spacing:-0.681px;">Annie Sanjana</span>
<span class="t" id="t3" style="left:1655px;top:12.53px;font-size:12px;line-height:14px;color:#555555;letter-spacing:-1.008px;">AS</span>
<span class="t" id="t4" style="left:25px;top:53.91px;font-size:14.8px;line-height:18px;color:#ffffff;letter-spacing:-0.336px;">File</span>
<span class="t" id="t5" style="left:88px;top:53.91px;font-size:14.8px;line-height:18px;color:#ffffff;letter-spacing:0.316px;">Home</span>
<span class="t" id="t6" style="left:156px;top:53.91px;font-size:14.8px;line-height:18px;color:#ffffff;letter-spacing:-0.169px;">Insert</span>
<span class="t" id="t7" style="left:219px;top:53.91px;font-size:14.8px;line-height:18px;color:#ffffff;letter-spacing:-0.094px;">Design</span>
<span class="t" id="t8" style="left:292px;top:53.91px;font-size:14.8px;line-height:18px;color:#ffffff;letter-spacing:-0.189px;">Transitions</span>
<span class="t" id="t9" style="left:389px;top:53.91px;font-size:14.8px;line-height:18px;color:#ffffff;letter-spacing:0.180px;">Animations</span>
<span class="t" id="t10" style="left:491px;top:53.91px;font-size:14.8px;line-height:18px;color:#ffffff;letter-spacing:-0.103px;">Slide Show</span>
<span class="t" id="t11" style="left:591px;top:53.91px;font-size:14.8px;line-height:18px;color:#ffffff;letter-spacing:-0.339px;">Review</span>
<span class="t" id="t12" style="left:665px;top:53.91px;font-size:14.8px;line-height:18px;color:#ffffff;letter-spacing:-0.078px;">View</span>
<span class="t" id="t13" style="left:724px;top:53.91px;font-size:14.8px;line-height:18px;color:#ffffff;letter-spacing:0.266px;">Help</span>
<span class="t" id="t14" style="left:792.2px;top:53.91px;font-size:14.8px;line-height:18px;color:#b7472a;letter-spacing:-0.013px;">Format</span>
<span class="t" id="t15" style="left:910.7px;top:53.41px;font-size:14.8px;line-height:18px;color:#ffffff;letter-spacing:0.193px;">Tell me what you want to do</span>
<span class="t" id="t16" style="left:1855.7px;top:54.41px;font-size:14.8px;line-height:18px;color:#ffffff;letter-spacing:-0.700px;">Share</span>
<span class="t" id="t17" style="left:25px;top:131.71px;font-size:14.8px;line-height:18px;color:#262626;letter-spacing:-0.185px;">Remove</span>
<span class="t" id="t18" style="left:12.5px;top:151.71px;font-size:14.8px;line-height:18px;color:#262626;letter-spacing:-0.098px;">Background</span>
<span class="t" id="t19" style="left:107px;top:131.71px;font-size:14.8px;line-height:18px;color:#262626;letter-spacing:-0.060px;">Corrections</span>
<span class="t" id="t20" style="left:193px;top:131.71px;font-size:14.8px;line-height:18px;color:#262626;letter-spacing:0.128px;">Color</span>
<span class="t" id="t21" style="left:243.1px;top:131.71px;font-size:14.8px;line-height:18px;color:#262626;letter-spacing:0.224px;">Artistic</span>
<span class="t" id="t22" style="left:240px;top:151.71px;font-size:14.8px;line-height:18px;color:#262626;letter-spacing:-0.310px;">Effects</span>
<span class="t" id="t23" style="left:324.2px;top:90.11px;font-size:14.8px;line-height:18px;color:#262626;letter-spacing:-0.329px;">Compress Pictures</span>
<span class="t" id="t24" style="left:324.2px;top:119.11px;font-size:14.8px;line-height:18px;color:#262626;letter-spacing:-0.264px;">Change Picture</span>
<span class="t" id="t25" style="left:324.2px;top:148.01px;font-size:14.8px;line-height:18px;color:#262626;letter-spacing:-0.371px;">Reset Picture</span>
<span class="t" id="t26" style="left:213px;top:177.97px;font-size:13.4px;line-height:16px;color:#262626;letter-spacing:0.047px;">Adju</span>
<span class="t" id="t27" style="left:1087.5px;top:90.31px;font-size:14.8px;line-height:18px;color:#262626;letter-spacing:-0.113px;">Picture Border</span>
<span class="t" id="t28" style="left:1087.5px;top:119.11px;font-size:14.8px;line-height:18px;color:#262626;letter-spacing:-0.208px;">Picture Effects</span>
<span class="t" id="t29" style="left:1087.5px;top:148.11px;font-size:14.8px;line-height:18px;color:#262626;letter-spacing:-0.185px;">Picture Layout</span>
<span class="t" id="t30" style="left:787px;top:177.97px;font-size:13.4px;line-height:16px;color:#262626;letter-spacing:-0.420px;">Picture Styles</span>
<span class="t" id="t31" style="left:1237px;top:132.11px;font-size:14.8px;line-height:18px;color:#262626;letter-spacing:0.573px;">Alt</span>
<span class="t" id="t32" style="left:1233.75px;top:151.91px;font-size:14.8px;line-height:18px;color:#262626;letter-spacing:-0.348px;">Text</span>
<span class="t" id="t33" style="left:1212.5px;top:177.97px;font-size:13.4px;line-height:16px;color:#262626;letter-spacing:-0.380px;">Accessibility</span>
<span class="t" id="t34" style="left:1313px;top:132.11px;font-size:14.8px;line-height:18px;color:#262626;letter-spacing:-0.009px;">Bring</span>
<span class="t" id="t35" style="left:1298px;top:151.91px;font-size:14.8px;line-height:18px;color:#262626;letter-spacing:-0.183px;">Forward</span>
<span class="t" id="t36" style="left:1388px;top:132.11px;font-size:14.8px;line-height:18px;color:#262626;letter-spacing:-0.516px;">Send</span>
<span class="t" id="t37" style="left:1367.5px;top:151.91px;font-size:14.8px;line-height:18px;color:#262626;letter-spacing:-0.246px;">Backward</span>
<span class="t" id="t38" style="left:1446px;top:132.11px;font-size:14.8px;line-height:18px;color:#262626;letter-spacing:-0.014px;">Selection</span>
<span class="t" id="t39" style="left:1461px;top:151.91px;font-size:14.8px;line-height:18px;color:#262626;letter-spacing:-0.953px;">Pane</span>
<span class="t" id="t40" style="left:1538px;top:90.31px;font-size:14.8px;line-height:18px;color:#262626;letter-spacing:0.319px;">Align</span>
<span class="t" id="t41" style="left:1538px;top:119.11px;font-size:14.8px;line-height:18px;color:#a6a6a6;letter-spacing:-0.075px;">Group</span>
<span class="t" id="t42" style="left:1538px;top:148.11px;font-size:14.8px;line-height:18px;color:#262626;letter-spacing:-0.102px;">Rotate</span>
<span class="t" id="t43" style="left:1424px;top:177.97px;font-size:13.4px;line-height:16px;color:#262626;letter-spacing:-0.163px;">Arrange</span>
<span class="t" id="t44" style="left:1631px;top:132.11px;font-size:14.8px;line-height:18px;color:#262626;letter-spacing:-0.145px;">Crop</span>
<span class="t" id="t45" style="left:1701.5px;top:99.91px;font-size:14.8px;line-height:18px;color:#262626;letter-spacing:0.051px;">Height:</span>
<span class="t" id="t46" style="left:1759px;top:99.91px;font-size:14.8px;line-height:18px;color:#262626;letter-spacing:-0.314px;">11.17 cm</span>
<span class="t" id="t47" style="left:1701.5px;top:138.81px;font-size:14.8px;line-height:18px;color:#262626;letter-spacing:0.094px;">Width:</span>
<span class="t" id="t48" style="left:1758px;top:138.81px;font-size:14.8px;line-height:18px;color:#262626;letter-spacing:-0.320px;">9.97 cm</span>
<span class="t" id="t49" style="left:1711.25px;top:177.97px;font-size:13.4px;line-height:16px;color:#262626;letter-spacing:-0.953px;">Size</span>
<span class="t" id="t50" style="left:16px;top:215.32px;font-size:17.5px;line-height:21px;color:#555555;letter-spacing:-2.734px;">1</span>
<span class="t" id="t51" style="left:15.5px;top:364.72px;font-size:17.5px;line-height:21px;color:#c43e1c;letter-spacing:-1.234px;">2</span>
<span class="t" id="t52" style="left:15.5px;top:513.42px;font-size:17.5px;line-height:21px;color:#555555;letter-spacing:-1.234px;">3</span>
<span class="t" id="t53" style="left:60.5px;top:315.83px;font-size:9.6px;line-height:12px;color:#15153a;letter-spacing:0.898px;font-weight:bold;transform:scaleX(.62);transform-origin:0 0;">APPLY ARTISTIC EFFECT TO PICTURE</span>
<span class="t" id="t54" style="left:65px;top:386.63px;font-size:9.6px;line-height:12px;color:#15153a;letter-spacing:0.354px;font-weight:bold;transform:scaleX(.62);transform-origin:0 0;">EXAMPLE</span>
<span class="t" id="t55" style="left:65px;top:535.53px;font-size:9.6px;line-height:12px;color:#15153a;letter-spacing:0.832px;font-weight:bold;transform:scaleX(.62);transform-origin:0 0;">THANK YOU!</span>
<span class="t" id="t56" style="left:10.3px;top:1009.34px;font-size:13.2px;line-height:16px;color:#444444;letter-spacing:-0.082px;">Slide 2 of 3</span>
<span class="t" id="t57" style="left:139.7px;top:1009.34px;font-size:13.2px;line-height:16px;color:#444444;letter-spacing:-0.273px;">English (United States)</span>
<span class="t" id="t58" style="left:1308.3px;top:1009.34px;font-size:13.2px;line-height:16px;color:#444444;letter-spacing:-0.051px;">Notes</span>
<span class="t" id="t59" style="left:1389.5px;top:1009.34px;font-size:13.2px;line-height:16px;color:#444444;letter-spacing:-0.308px;">Comments</span>
<span class="t" id="t60" style="left:1855.4px;top:1009.14px;font-size:13.2px;line-height:16px;color:#444444;letter-spacing:-0.835px;">86%</span>
<span class="t" id="t61" style="left:278.4px;top:701.91px;font-size:14.8px;line-height:18px;color:#444444;letter-spacing:-0.095px;z-index:5;">Artistic <u>E</u>ffects Options...</span>
<span class="t" id="t62" style="left:1360.3px;top:773.11px;font-size:28.4px;line-height:34px;color:#0a0a0a;letter-spacing:0.861px;">developerpublish.com</span>
<svg width="0" height="0" style="position:absolute"><defs>
<filter id="fPencil" color-interpolation-filters="sRGB"><feColorMatrix type="saturate" values="0"/><feComponentTransfer><feFuncR type="table" tableValues="0.08 0.32 0.82 0.96 1"/><feFuncG type="table" tableValues="0.08 0.32 0.82 0.96 1"/><feFuncB type="table" tableValues="0.08 0.32 0.82 0.96 1"/></feComponentTransfer></filter>
<filter id="fSketch" color-interpolation-filters="sRGB"><feColorMatrix type="saturate" values="0"/><feComponentTransfer><feFuncR type="table" tableValues="0.05 0.5 1 1 1"/><feFuncG type="table" tableValues="0.05 0.5 1 1 1"/><feFuncB type="table" tableValues="0.05 0.5 1 1 1"/></feComponentTransfer></filter>
<filter id="fChalk" color-interpolation-filters="sRGB" x="-10%" y="-10%" width="120%" height="120%"><feColorMatrix type="saturate" values="0"/><feGaussianBlur stdDeviation="1.6"/><feComponentTransfer><feFuncR type="table" tableValues="0.42 0.62 0.8 0.9"/><feFuncG type="table" tableValues="0.42 0.62 0.8 0.9"/><feFuncB type="table" tableValues="0.42 0.62 0.8 0.9"/><feFuncA type="table" tableValues="0 0.2 1 1"/></feComponentTransfer></filter>
<filter id="fGlow" color-interpolation-filters="sRGB"><feGaussianBlur stdDeviation="0.6"/><feComponentTransfer><feFuncR type="table" tableValues="0.15 0.7 0.97 1"/><feFuncG type="table" tableValues="0.15 0.7 0.97 1"/><feFuncB type="table" tableValues="0.15 0.7 0.97 1"/></feComponentTransfer></filter>
<filter id="fGlass" color-interpolation-filters="sRGB" x="-10%" y="-10%" width="120%" height="120%"><feTurbulence type="fractalNoise" baseFrequency="0.35" numOctaves="2" seed="4" result="n"/><feDisplacementMap in="SourceGraphic" in2="n" scale="6.5" xChannelSelector="R" yChannelSelector="G"/></filter>
<filter id="fGrain" color-interpolation-filters="sRGB"><feTurbulence type="fractalNoise" baseFrequency="0.9" numOctaves="1" seed="2" result="n"/><feDisplacementMap in="SourceGraphic" in2="n" scale="2.5" xChannelSelector="R" yChannelSelector="G"/></filter>
<filter id="fCut" color-interpolation-filters="sRGB"><feGaussianBlur stdDeviation="1.1"/><feColorMatrix type="saturate" values="0.75"/><feComponentTransfer><feFuncR type="discrete" tableValues="0.3 0.5 0.72 0.88 0.96"/><feFuncG type="discrete" tableValues="0.12 0.4 0.62 0.8 0.9"/><feFuncB type="discrete" tableValues="0.15 0.25 0.45 0.62 0.8"/><feFuncA type="table" tableValues="0 0 1 1"/></feComponentTransfer></filter>
<filter id="fCopy" color-interpolation-filters="sRGB"><feGaussianBlur stdDeviation="0.5"/><feColorMatrix type="saturate" values="0.25"/><feComponentTransfer><feFuncR type="table" tableValues="0.02 0.1 0.75 0.97 1"/><feFuncG type="table" tableValues="0 0.05 0.6 0.94 1"/><feFuncB type="table" tableValues="0.05 0.1 0.62 0.92 0.97"/></feComponentTransfer></filter>
<filter id="fEdge" color-interpolation-filters="sRGB"><feGaussianBlur in="SourceGraphic" stdDeviation="1.1" result="b"/><feComposite in="SourceGraphic" in2="b" operator="arithmetic" k1="0" k2="3.2" k3="-3.2" k4="0" result="e1"/><feComposite in="b" in2="SourceGraphic" operator="arithmetic" k1="0" k2="1.2" k3="-1.2" k4="0" result="e2"/><feComposite in="e1" in2="e2" operator="arithmetic" k2="1" k3="1" result="e"/><feFlood flood-color="#0c1a1c"/><feComposite in2="SourceAlpha" operator="in" result="bg"/><feComposite in="e" in2="bg" operator="arithmetic" k2="1" k3="1"/><feComponentTransfer><feFuncA type="table" tableValues="0 1 1"/></feComponentTransfer></filter>
<filter id="fPix" x="0" y="0" width="100%" height="100%" color-interpolation-filters="sRGB"><feFlood x="1.4" y="1.4" height="1" width="1"/><feComposite width="3.8" height="3.8"/><feTile result="a"/><feComposite in="SourceGraphic" in2="a" operator="in"/><feMorphology operator="dilate" radius="1.9"/></filter>
<pattern id="grid" width="3.8" height="3.8" patternUnits="userSpaceOnUse"><path d="M0 0.3H3.8M0.3 0V3.8" stroke="#fff" stroke-width="0.7" opacity=".7"/></pattern>
<pattern id="grid2" width="2.6" height="2.6" patternUnits="userSpaceOnUse"><path d="M0 0.3H2.6M0.3 0V2.6" stroke="#fff" stroke-width="0.5" opacity=".45"/></pattern>
</defs></svg>
<div class="a" style="left:237px;top:171px;width:474px;height:556px;background:#ffffff;box-sizing:border-box;border:1px solid #c6c6c6;box-shadow:1px 1px 3px rgba(0,0,0,.18);"></div>
<div class="a" style="left:239.25px;top:173px;width:93.75px;height:103.8px;background:#c0c0c0;"></div>
<div class="a" style="left:244px;top:177.7px;width:84.1px;height:94.3px;background:#fff;"></div>
<div class="a" style="left:521.2px;top:485px;width:93.75px;height:103.8px;background:#c0c0c0;"></div>
<div class="a" style="left:525.95px;top:489.7px;width:84.1px;height:94.3px;background:#fff;"></div>
<svg class="a" style="left:242.00px;top:178.20px;opacity:1;" width="91.8" height="89.7" viewBox="0 0 440 430"><use href="#ice"/></svg>
<svg class="a" style="left:336.05px;top:178.20px;opacity:1;filter:contrast(1.05);" width="91.8" height="89.7" viewBox="0 0 440 430"><use href="#ice"/></svg>
<svg class="a" style="left:430.10px;top:178.20px;opacity:1;filter:url(#fPencil);" width="91.8" height="89.7" viewBox="0 0 440 430"><use href="#ice"/></svg>
<svg class="a" style="left:524.15px;top:178.20px;opacity:1;filter:url(#fSketch);" width="91.8" height="89.7" viewBox="0 0 440 430"><use href="#ice"/></svg>
<svg class="a" style="left:618.20px;top:178.20px;opacity:0.95;filter:brightness(1.05) saturate(0.95);" width="91.8" height="89.7" viewBox="0 0 440 430"><use href="#ice"/></svg>
<svg class="a" style="left:242.00px;top:282.20px;opacity:1;filter:url(#fChalk);" width="91.8" height="89.7" viewBox="0 0 440 430"><use href="#ice"/></svg>
<svg class="a" style="left:336.05px;top:282.20px;opacity:1;filter:blur(0.5px) saturate(1.1);" width="91.8" height="89.7" viewBox="0 0 440 430"><use href="#ice"/></svg>
<svg class="a" style="left:430.10px;top:282.20px;opacity:1;filter:blur(0.4px) saturate(1.1);" width="91.8" height="89.7" viewBox="0 0 440 430"><use href="#ice"/></svg>
<svg class="a" style="left:524.15px;top:282.20px;opacity:1;filter:url(#fGlow);" width="91.8" height="89.7" viewBox="0 0 440 430"><use href="#ice"/></svg>
<svg class="a" style="left:618.20px;top:282.20px;opacity:1;filter:blur(3.2px) saturate(1.2);" width="91.8" height="89.7" viewBox="0 0 440 430"><use href="#ice"/></svg>
<svg class="a" style="left:242.00px;top:386.20px;opacity:1;filter:url(#fPix) saturate(1.3);" width="91.8" height="89.7" viewBox="0 0 440 430"><use href="#ice"/></svg>
<svg class="a" style="left:242.00px;top:386.20px" width="91.8" height="89.7"><rect width="92" height="90" fill="url(#grid)"/></svg>
<svg class="a" style="left:336.05px;top:386.20px;opacity:1;filter:blur(0.7px) saturate(1.1);" width="91.8" height="89.7" viewBox="0 0 440 430"><use href="#ice"/></svg>
<svg class="a" style="left:430.10px;top:386.20px;opacity:1;filter:url(#fGrain);" width="91.8" height="89.7" viewBox="0 0 440 430"><use href="#ice"/></svg>
<svg class="a" style="left:524.15px;top:386.20px;opacity:1;filter:blur(0.3px);" width="91.8" height="89.7" viewBox="0 0 440 430"><use href="#ice"/></svg>
<svg class="a" style="left:618.20px;top:386.20px;opacity:1;filter:url(#fGlass) contrast(1.2);" width="91.8" height="89.7" viewBox="0 0 440 430"><use href="#ice"/></svg>
<svg class="a" style="left:242.00px;top:490.20px;opacity:1;filter:contrast(1.15) saturate(1.1);" width="91.8" height="89.7" viewBox="0 0 440 430"><use href="#ice"/></svg>
<svg class="a" style="left:336.05px;top:490.20px;opacity:1;" width="91.8" height="89.7" viewBox="0 0 440 430"><use href="#ice"/></svg>
<svg class="a" style="left:336.05px;top:490.20px" width="91.8" height="89.7"><rect width="92" height="90" fill="url(#grid2)"/></svg>
<svg class="a" style="left:430.10px;top:490.20px;opacity:0.88;filter:brightness(1.06) saturate(0.9);" width="91.8" height="89.7" viewBox="0 0 440 430"><use href="#ice"/></svg>
<svg class="a" style="left:524.15px;top:490.20px;opacity:1;filter:contrast(1.05);" width="91.8" height="89.7" viewBox="0 0 440 430"><use href="#ice"/></svg>
<svg class="a" style="left:618.20px;top:490.20px;opacity:0.95;filter:saturate(0.8) brightness(1.03);" width="91.8" height="89.7" viewBox="0 0 440 430"><use href="#ice"/></svg>
<svg class="a" style="left:242.00px;top:594.20px;opacity:1;filter:url(#fCut);" width="91.8" height="89.7" viewBox="0 0 440 430"><use href="#ice"/></svg>
<svg class="a" style="left:336.05px;top:594.20px;opacity:1;filter:url(#fCopy);" width="91.8" height="89.7" viewBox="0 0 440 430"><use href="#ice"/></svg>
<svg class="a" style="left:430.10px;top:594.20px;opacity:1;filter:url(#fEdge);" width="91.8" height="89.7" viewBox="0 0 440 430"><use href="#ice"/></svg>
<div class="a" style="left:239.5px;top:693.2px;width:469.5px;height:1px;background:#e1e1e1;"></div>
<svg class="a" style="left:243px;top:699px;" width="21" height="20" viewBox="0 0 21 20"><path d="M1 8.6L7 2.6L12.6 8.2L6.6 14.2Z" fill="#fff" stroke="#6a6a6a" stroke-width="1"/><path d="M5 3.6V1.6Q5 0.5 6.1 0.5Q7.2 0.5 7.2 1.6V5" fill="none" stroke="#6a6a6a" stroke-width=".9"/><path d="M9.6 5.4Q13.4 5.6 13.6 9.6Q13.4 11 12.4 9.6Q11.6 8.2 10.4 8Z" fill="#2e75b6"/><path d="M20.2 5L20 9.2L14.6 14.4L13.2 13Z" fill="#6a6a6a"/><path d="M13 13.4L14.4 14.8Q13.6 18.6 7 19.4Q9.4 17.8 9.8 15.6Q10.6 13.2 13 13.4Z" fill="#2e75b6"/></svg>
</body></html>
